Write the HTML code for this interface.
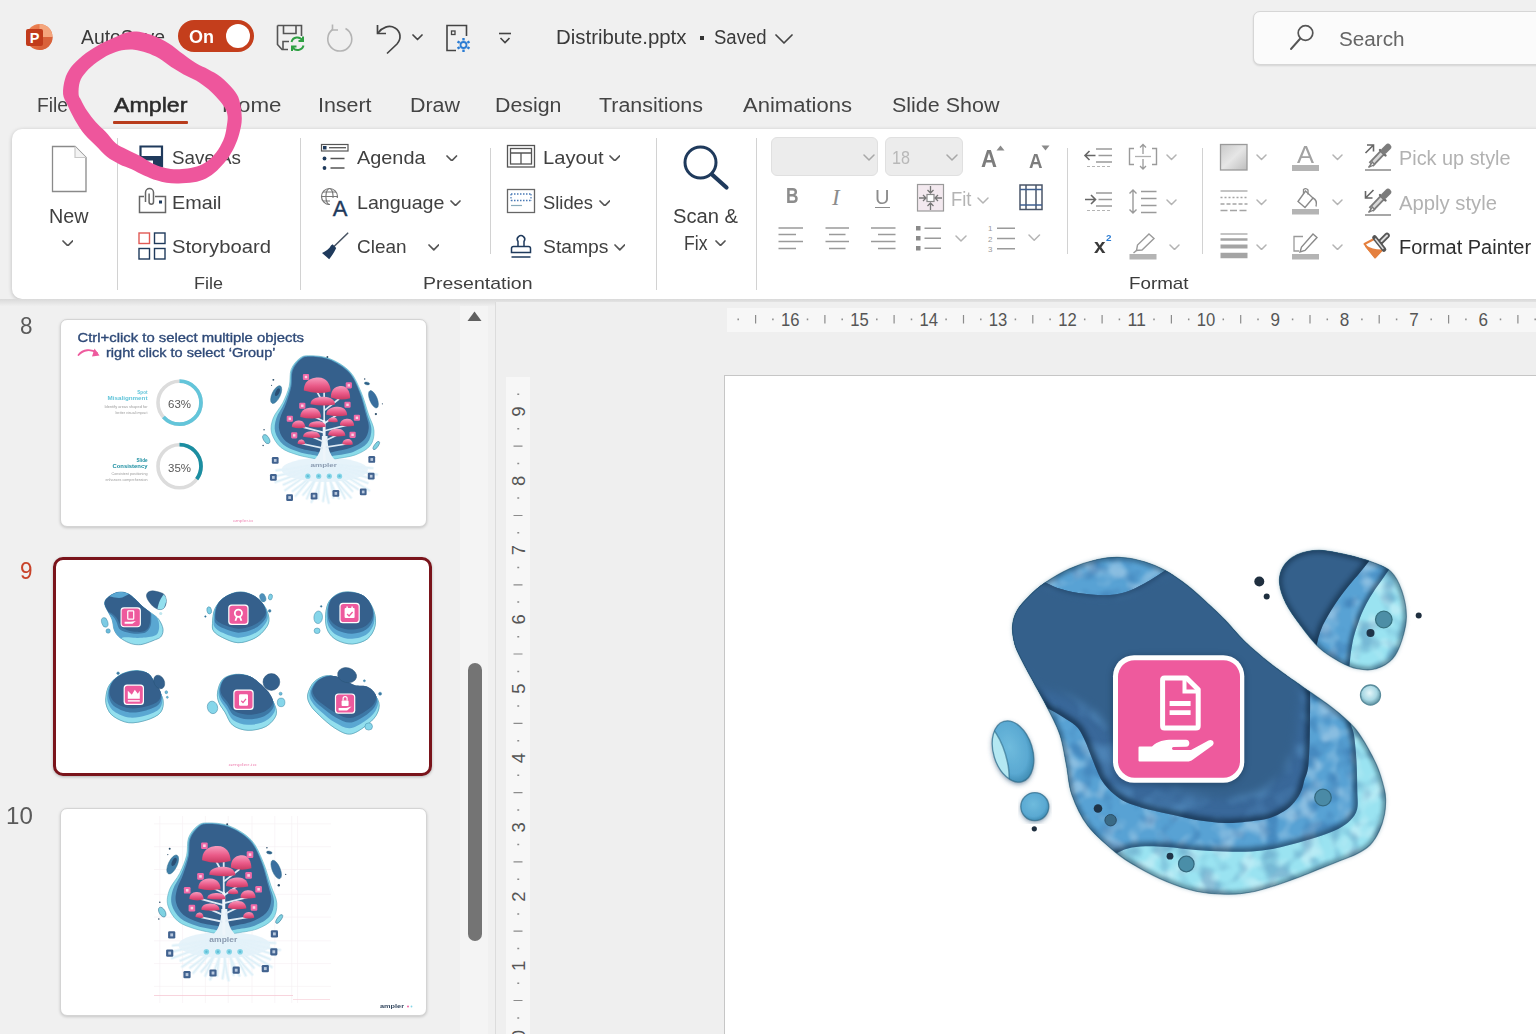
<!DOCTYPE html>
<html lang="en"><head><meta charset="utf-8"><title>Distribute.pptx - PowerPoint</title>
<style>
html,body{margin:0;padding:0}
body{width:1536px;height:1034px;overflow:hidden;background:#f0f0f0;position:relative;font-family:"Liberation Sans",sans-serif}
.a{position:absolute;display:block}
.t{position:absolute;display:block;white-space:nowrap;line-height:1;transform-origin:0 50%}
#titlebar{left:0;top:0;width:1536px;height:78px}
#tabs{left:0;top:78px;width:1536px;height:51px}
#ribbon{left:12px;top:129px;width:1560px;height:170px;background:#fff;border-radius:10px;box-shadow:0 1px 4px rgba(0,0,0,.22)}
.sep{position:absolute;width:1px;background:#d2d2d2}
#thumbs{left:0;top:302px;width:495px;height:732px;background:#f0f0f0}
#editor{left:496px;top:302px;width:1040px;height:732px;background:#efefef}
</style></head><body>
<div id="titlebar" class="a"><svg class="a" style="left:24px;top:22px" width="30" height="30" viewBox="0 0 30 30">
<defs><linearGradient id="pg" x1="0" y1="0" x2="1" y2="1"><stop offset="0" stop-color="#f08a5a"/><stop offset="1" stop-color="#d2502a"/></linearGradient></defs>
<circle cx="15.5" cy="15" r="13" fill="url(#pg)"/>
<path d="M15.5 2 A13 13 0 0 1 28.5 15 L15.5 15Z" fill="#f4a57c"/>
<path d="M15.5 28 A13 13 0 0 0 28.5 15 L15.5 15Z" fill="#d9623a"/>
<rect x="2" y="7" width="17" height="17" rx="2" fill="#c13b1b"/>
<text x="10.5" y="21" font-family="Liberation Sans,sans-serif" font-weight="bold" font-size="14.5" fill="#fff" text-anchor="middle">P</text>
</svg><span class="t" style="left:81.0px;top:27.5px;font-size:19.5px;color:#3a3a3a;font-weight:normal;transform:scaleX(0.993);">AutoSave</span><div class="a" style="left:178px;top:20px;width:76px;height:32px;border-radius:16px;background:#c43e1c"></div><div class="a" style="left:226px;top:24px;width:24px;height:24px;border-radius:12px;background:#fff"></div><span class="t" style="left:189.0px;top:27.8px;font-size:18.5px;color:#fff;font-weight:bold;transform:scaleX(0.973);">On</span><svg class="a" style="left:274px;top:22px" width="34" height="32" viewBox="0 0 34 32">
<path d="M3.5 3.5 H27.5 V14 M3.5 3.5 V22.5 L8 27.5 H14" fill="none" stroke="#555" stroke-width="1.6"/>
<path d="M9.5 3.5 V11.5 H22 V3.5" fill="none" stroke="#555" stroke-width="1.6"/>
<path d="M9 27 V19.5 H15" fill="none" stroke="#555" stroke-width="1.6"/>
<path d="M17.5 20 A6 6 0 0 1 28.5 18.5 M29 14.5 V19 H24.5" fill="none" stroke="#2ea043" stroke-width="2"/>
<path d="M29.5 23.5 A6 6 0 0 1 18.5 25 M18 29 V24.5 H22.5" fill="none" stroke="#2ea043" stroke-width="2"/>
</svg><svg class="a" style="left:323px;top:22px" width="34" height="32" viewBox="0 0 34 32">
<path d="M22.5 6.5 A12 12 0 1 1 9.5 7.5" fill="none" stroke="#b4b4b4" stroke-width="1.6"/>
<path d="M9.5 2.5 V8 H15" fill="none" stroke="#b4b4b4" stroke-width="1.6"/></svg><svg class="a" style="left:374px;top:22px" width="30" height="34" viewBox="0 0 30 34">
<path d="M3.5 3 V11.5 H12" fill="none" stroke="#444" stroke-width="1.7"/>
<path d="M4 11 C8 5.5 15 2.5 21 6 C27 9.5 27.5 17 23 22 L13 31.5" fill="none" stroke="#444" stroke-width="1.7"/></svg><svg class="a" style="left:412.0px;top:34.2px" width="11.0" height="6.5"><polyline points="1,1 5.5,5.5 10.0,1" fill="none" stroke="#444" stroke-width="1.7" stroke-linecap="round" stroke-linejoin="round"/></svg><svg class="a" style="left:444px;top:22px" width="30" height="32" viewBox="0 0 30 32">
<path d="M12 28.5 H3 V3.5 H22.5 V14" fill="none" stroke="#444" stroke-width="1.6"/>
<rect x="7.5" y="9" width="3.5" height="3.5" fill="none" stroke="#444" stroke-width="1.3"/>
<circle cx="19.5" cy="23" r="3" fill="none" stroke="#2b7cd3" stroke-width="1.8"/>
<path d="M19.5 16 V18.5 M19.5 27.5 V30 M13.5 19.5 L15.7 20.8 M23.3 25.2 L25.5 26.5 M13.5 26.5 L15.7 25.2 M23.3 20.8 L25.5 19.5" stroke="#2b7cd3" stroke-width="2.4"/>
</svg><svg class="a" style="left:497px;top:30px" width="16" height="16" viewBox="0 0 16 16">
<path d="M2 3.5 H14" stroke="#444" stroke-width="1.6"/><path d="M3.5 8 L8 12.5 L12.5 8" fill="none" stroke="#444" stroke-width="1.6"/></svg><span class="t" style="left:556.0px;top:28.0px;font-size:19.5px;color:#3a3a3a;font-weight:normal;transform:scaleX(1.047);">Distribute.pptx</span><div class="a" style="left:700px;top:36px;width:4px;height:4px;background:#333"></div><span class="t" style="left:714.0px;top:28.0px;font-size:19.5px;color:#3a3a3a;font-weight:normal;transform:scaleX(0.950);">Saved</span><svg class="a" style="left:775.0px;top:33.5px" width="18.0" height="10.0"><polyline points="1,1 9.0,9.0 17.0,1" fill="none" stroke="#444" stroke-width="1.7" stroke-linecap="round" stroke-linejoin="round"/></svg><div class="a" style="left:1253px;top:11px;width:300px;height:52px;border-radius:7px;background:#fbfbfb;border:1px solid #d6d6d6;box-shadow:0 1px 2px rgba(0,0,0,.12)"></div><svg class="a" style="left:1288px;top:22px" width="28" height="30" viewBox="0 0 28 30">
<circle cx="17.5" cy="11" r="7.3" fill="none" stroke="#555" stroke-width="1.7"/><path d="M12.3 16.5 L3 27" stroke="#555" stroke-width="1.9" stroke-linecap="round"/></svg><span class="t" style="left:1338.5px;top:29.1px;font-size:20px;color:#666;font-weight:normal;transform:scaleX(1.034);">Search</span></div><div id="tabs" class="a" style="top:0;height:129px;pointer-events:none"><span class="t" style="left:36.5px;top:95.1px;font-size:20px;color:#444;font-weight:normal;transform:scaleX(0.962);">File</span><span class="t" style="left:113.5px;top:94.6px;font-size:20.5px;color:#2b2b2b;font-weight:normal;transform:scaleX(1.132);-webkit-text-stroke:.500px #2b2b2b;">Ampler</span><div class="a" style="left:113px;top:121px;width:75px;height:3px;background:#b83c1c;border-radius:1px"></div><span class="t" style="left:221.5px;top:95.1px;font-size:20px;color:#444;font-weight:normal;transform:scaleX(1.115);">Home</span><span class="t" style="left:318.0px;top:95.1px;font-size:20px;color:#444;font-weight:normal;transform:scaleX(1.070);">Insert</span><span class="t" style="left:409.5px;top:95.1px;font-size:20px;color:#444;font-weight:normal;transform:scaleX(1.071);">Draw</span><span class="t" style="left:494.5px;top:95.1px;font-size:20px;color:#444;font-weight:normal;transform:scaleX(1.068);">Design</span><span class="t" style="left:599.0px;top:95.1px;font-size:20px;color:#444;font-weight:normal;transform:scaleX(1.071);">Transitions</span><span class="t" style="left:743.0px;top:95.1px;font-size:20px;color:#444;font-weight:normal;transform:scaleX(1.102);">Animations</span><span class="t" style="left:892.0px;top:95.1px;font-size:20px;color:#444;font-weight:normal;transform:scaleX(1.074);">Slide Show</span></div><div id="ribbon" class="a"></div><div id="ribbonc" class="a" style="left:0;top:0"><svg class="a" style="left:50px;top:144px" width="40" height="50" viewBox="0 0 40 50">
<path d="M2.5 2.5 H25 L36 13.5 V47.5 H2.5Z" fill="#fff" stroke="#8a8a8a" stroke-width="1.3"/>
<path d="M25 2.5 V13.5 H36" fill="#f3f3f3" stroke="#c8c8c8" stroke-width="1.2"/></svg><span class="t" style="left:48.5px;top:207.0px;font-size:19.5px;color:#404040;font-weight:normal;transform:scaleX(1.013);">New</span><svg class="a" style="left:61.5px;top:239.6px" width="11.5" height="6.8"><polyline points="1,1 5.8,5.8 10.5,1" fill="none" stroke="#555" stroke-width="1.7" stroke-linecap="round" stroke-linejoin="round"/></svg><div class="sep" style="left:117px;top:138px;height:152px"></div><svg class="a" style="left:137px;top:144px" width="28" height="26" viewBox="0 0 28 26">
<path d="M3.5 2.5 H25 V22.5 H3.5Z" fill="none" stroke="#1f3a5c" stroke-width="2.2"/>
<rect x="4" y="12" width="21" height="4.5" fill="#1f3a5c"/>
<rect x="16" y="16" width="9" height="7" fill="#1f3a5c"/></svg><span class="t" style="left:172.0px;top:148.4px;font-size:19px;color:#404040;font-weight:normal;transform:scaleX(0.990);">Save As</span><svg class="a" style="left:136px;top:186px" width="32" height="30" viewBox="0 0 32 30">
<path d="M8 10.5 H3.5 V26.5 H29.5 V10.5 H19" fill="none" stroke="#666" stroke-width="1.5"/>
<path d="M9.5 16 V6.5 A4 4 0 0 1 17.500 6.500 V16 A2.200 2.200 0 0 1 13.100 16 V7.500" fill="none" stroke="#666" stroke-width="1.5"/>
<rect x="23" y="14.5" width="3" height="3" fill="#1f3a5c"/></svg><span class="t" style="left:172.0px;top:193.4px;font-size:19px;color:#404040;font-weight:normal;transform:scaleX(1.042);">Email</span><svg class="a" style="left:137px;top:231px" width="30" height="30" viewBox="0 0 30 30">
<rect x="2" y="2" width="10.5" height="10.500" fill="none" stroke="#e05a55" stroke-width="1.4"/>
<rect x="17.500" y="2" width="10.500" height="10.500" fill="none" stroke="#1f3a5c" stroke-width="1.4"/>
<rect x="2" y="17.500" width="10.500" height="10.500" fill="none" stroke="#1f3a5c" stroke-width="1.4"/>
<rect x="17.500" y="17.500" width="10.500" height="10.500" fill="none" stroke="#1f3a5c" stroke-width="1.4"/></svg><span class="t" style="left:172.0px;top:237.4px;font-size:19px;color:#404040;font-weight:normal;transform:scaleX(1.065);">Storyboard</span><span class="t" style="left:193.5px;top:275.1px;font-size:17px;color:#404040;font-weight:normal;transform:scaleX(1.059);">File</span><div class="sep" style="left:300px;top:138px;height:152px"></div><svg class="a" style="left:319px;top:142px" width="32" height="30" viewBox="0 0 32 30">
<rect x="2.500" y="2.500" width="26.500" height="6.500" fill="none" stroke="#555" stroke-width="1.2"/>
<rect x="4" y="4" width="3.500" height="3.500" fill="#1f3a5c"/><path d="M10 5.700 H27" stroke="#555" stroke-width="1.300"/>
<circle cx="5.500" cy="16.500" r="1.900" fill="#1f3a5c"/><path d="M11.500 16.500 H25.500" stroke="#555" stroke-width="1.500"/>
<circle cx="5.500" cy="26" r="1.900" fill="#1f3a5c"/><path d="M11.500 26 H25.500" stroke="#555" stroke-width="1.500"/></svg><span class="t" style="left:356.5px;top:148.4px;font-size:19px;color:#404040;font-weight:normal;transform:scaleX(1.046);">Agenda</span><svg class="a" style="left:446.0px;top:154.6px" width="11.5" height="6.8"><polyline points="1,1 5.8,5.8 10.5,1" fill="none" stroke="#555" stroke-width="1.7" stroke-linecap="round" stroke-linejoin="round"/></svg><svg class="a" style="left:319px;top:186px" width="32" height="32" viewBox="0 0 32 32">
<circle cx="10.500" cy="10.500" r="8" fill="none" stroke="#777" stroke-width="1.200"/>
<ellipse cx="10.500" cy="10.500" rx="3.600" ry="8" fill="none" stroke="#777" stroke-width="1.100"/>
<path d="M2.500 10.500 H18.500 M4 6 H17 M4 15 H17" stroke="#777" stroke-width="1.100"/>
<rect x="11" y="12" width="20" height="19" fill="#fff"/>
<text x="21" y="29.500" text-anchor="middle" font-family="Liberation Sans,sans-serif" font-size="22" fill="#1f3a5c" stroke="#1f3a5c" stroke-width=".4">A</text></svg><span class="t" style="left:356.5px;top:193.4px;font-size:19px;color:#404040;font-weight:normal;transform:scaleX(1.035);">Language</span><svg class="a" style="left:450.0px;top:199.8px" width="11.0" height="6.5"><polyline points="1,1 5.5,5.5 10.0,1" fill="none" stroke="#555" stroke-width="1.7" stroke-linecap="round" stroke-linejoin="round"/></svg><svg class="a" style="left:319px;top:231px" width="32" height="30" viewBox="0 0 32 30">
<path d="M28.700 2.200 L15 15.500" stroke="#4a5564" stroke-width="1.600" stroke-linecap="round"/>
<path d="M13.600 13.200 L17.200 17 C15.500 20.500 13.500 24 10.200 28.200 L3 22 C7 20.500 10.500 17.500 12 14.500Z" fill="#1f3a5c"/></svg><span class="t" style="left:356.5px;top:237.4px;font-size:19px;color:#404040;font-weight:normal;transform:scaleX(0.997);">Clean</span><svg class="a" style="left:427.5px;top:244.1px" width="11.5" height="6.8"><polyline points="1,1 5.8,5.8 10.5,1" fill="none" stroke="#555" stroke-width="1.7" stroke-linecap="round" stroke-linejoin="round"/></svg><div class="sep" style="left:489.500px;top:148px;height:106px"></div><svg class="a" style="left:505px;top:143px" width="32" height="26" viewBox="0 0 32 26">
<rect x="2.500" y="2.500" width="27" height="21.500" fill="none" stroke="#555" stroke-width="1.300"/>
<rect x="5.500" y="5.500" width="21" height="15.500" fill="none" stroke="#555" stroke-width="1.300"/>
<path d="M5.500 10 H26.500 M16 10 V21" stroke="#555" stroke-width="1.300"/></svg><span class="t" style="left:542.5px;top:148.4px;font-size:19px;color:#404040;font-weight:normal;transform:scaleX(1.061);">Layout</span><svg class="a" style="left:608.5px;top:154.6px" width="11.5" height="6.8"><polyline points="1,1 5.8,5.8 10.5,1" fill="none" stroke="#555" stroke-width="1.7" stroke-linecap="round" stroke-linejoin="round"/></svg><svg class="a" style="left:505px;top:187px" width="32" height="28" viewBox="0 0 32 28">
<rect x="2.500" y="2.500" width="27" height="23" fill="none" stroke="#666" stroke-width="1.300"/>
<path d="M6 7 H26" stroke="#4a7ab5" stroke-width="1.400" stroke-dasharray="1.500 1.500"/>
<path d="M6 13.500 H26" stroke="#4a7ab5" stroke-width="1.400" stroke-dasharray="1.500 1.500"/>
<path d="M6 7 V13.500 M26 7 V13.500" stroke="#4a7ab5" stroke-width="1.200" stroke-dasharray="1.500 1.500"/>
<path d="M6 18.500 H17" stroke="#8ab" stroke-width="1.200"/></svg><span class="t" style="left:542.5px;top:193.4px;font-size:19px;color:#404040;font-weight:normal;transform:scaleX(0.966);">Slides</span><svg class="a" style="left:598.5px;top:199.6px" width="11.5" height="6.8"><polyline points="1,1 5.8,5.8 10.5,1" fill="none" stroke="#555" stroke-width="1.7" stroke-linecap="round" stroke-linejoin="round"/></svg><svg class="a" style="left:508px;top:232px" width="26" height="28" viewBox="0 0 26 28">
<path d="M10 14 V9.500 A3.700 3.700 0 1 1 16 9.500 V14" fill="none" stroke="#1f3a5c" stroke-width="1.500"/>
<path d="M3.500 20.500 V16.500 Q3.500 14.500 5.500 14.500 H20.500 Q22.500 14.500 22.500 16.500 V20.500Z" fill="none" stroke="#1f3a5c" stroke-width="1.500"/>
<path d="M3.500 25 H22.500" stroke="#1f3a5c" stroke-width="1.500"/></svg><span class="t" style="left:542.5px;top:237.4px;font-size:19px;color:#404040;font-weight:normal;transform:scaleX(1.017);">Stamps</span><svg class="a" style="left:613.5px;top:244.1px" width="11.5" height="6.8"><polyline points="1,1 5.8,5.8 10.5,1" fill="none" stroke="#555" stroke-width="1.7" stroke-linecap="round" stroke-linejoin="round"/></svg><span class="t" style="left:423.0px;top:275.1px;font-size:17px;color:#404040;font-weight:normal;transform:scaleX(1.147);">Presentation</span><div class="sep" style="left:655.500px;top:138px;height:152px"></div><svg class="a" style="left:680px;top:142px" width="52" height="52" viewBox="0 0 52 52">
<circle cx="20.500" cy="20.500" r="15.500" fill="none" stroke="#1f3a5c" stroke-width="3"/>
<path d="M32 32.500 L46.500 45.500" stroke="#1f3a5c" stroke-width="4.200" stroke-linecap="round"/></svg><span class="t" style="left:673.0px;top:207.0px;font-size:19.5px;color:#404040;font-weight:normal;transform:scaleX(1.034);">Scan &amp;</span><span class="t" style="left:684.0px;top:234.0px;font-size:19.5px;color:#404040;font-weight:normal;transform:scaleX(0.904);">Fix</span><svg class="a" style="left:714.5px;top:239.8px" width="11.0" height="6.5"><polyline points="1,1 5.5,5.5 10.0,1" fill="none" stroke="#555" stroke-width="1.7" stroke-linecap="round" stroke-linejoin="round"/></svg><div class="sep" style="left:756px;top:138px;height:152px"></div><div class="a" style="left:771px;top:137px;width:107px;height:39px;border-radius:6px;background:#ececec;border:1px solid #e0e0e0;box-sizing:border-box"></div><div class="a" style="left:885px;top:137px;width:78px;height:39px;border-radius:6px;background:#ececec;border:1px solid #e0e0e0;box-sizing:border-box"></div><svg class="a" style="left:862.5px;top:154.0px" width="12.0" height="7.0"><polyline points="1,1 6.0,6.0 11.0,1" fill="none" stroke="#a8a8a8" stroke-width="1.5" stroke-linecap="round" stroke-linejoin="round"/></svg><svg class="a" style="left:946.0px;top:154.0px" width="12.0" height="7.0"><polyline points="1,1 6.0,6.0 11.0,1" fill="none" stroke="#a8a8a8" stroke-width="1.5" stroke-linecap="round" stroke-linejoin="round"/></svg><span class="t" style="left:892.0px;top:147.9px;font-size:19px;color:#b8b8b8;font-weight:normal;transform:scaleX(0.852);">18</span><span class="t" style="left:981.0px;top:147.2px;font-size:24px;color:#7d7d7d;font-weight:bold;transform:scaleX(0.923);">A</span><svg class="a" style="left:996px;top:145px" width="9" height="6"><path d="M0.500 5.500 L4.500 0.500 L8.500 5.500Z" fill="#8a8a8a"/></svg><span class="t" style="left:1028.5px;top:150.6px;font-size:20px;color:#7d7d7d;font-weight:bold;transform:scaleX(0.935);">A</span><svg class="a" style="left:1041px;top:145px" width="9" height="6"><path d="M0.500 0.500 L4.500 5.500 L8.500 0.500Z" fill="#8a8a8a"/></svg><span class="t" style="left:786.0px;top:186.3px;font-size:21.5px;color:#8c8c8c;font-weight:bold;transform:scaleX(0.805);">B</span><span class="t" style="left:832px;top:185.500px;font-size:23px;color:#8c8c8c;font-style:italic;font-family:'Liberation Serif',serif">I</span><span class="t" style="left:875.0px;top:186.6px;font-size:20px;color:#8c8c8c;font-weight:normal;transform:scaleX(1.004);">U</span><div class="a" style="left:874.500px;top:206.500px;width:15.500px;height:1.500px;background:#8c8c8c"></div><svg class="a" style="left:916px;top:183px" width="30" height="30" viewBox="0 0 30 30">
<rect x="1.500" y="1.500" width="26" height="26.500" fill="#f3e9ef" stroke="#9a9a9a" stroke-width="1.200"/>
<rect x="11" y="11.500" width="7" height="7" fill="#fff" stroke="#8a8a8a" stroke-width="1.200"/>
<path d="M14.500 3 V10 M11.500 7 L14.500 10 L17.500 7 M14.500 27 V20 M11.500 23 L14.500 20 L17.500 23 M3 15 H10 M7 12 L10 15 L7 18 M26 15 H19 M22 12 L19 15 L22 18" fill="none" stroke="#777" stroke-width="1.300"/></svg><span class="t" style="left:951.0px;top:190.0px;font-size:19.5px;color:#b4b4b4;font-weight:normal;transform:scaleX(0.946);">Fit</span><svg class="a" style="left:977.0px;top:196.5px" width="12.0" height="7.0"><polyline points="1,1 6.0,6.0 11.0,1" fill="none" stroke="#b4b4b4" stroke-width="1.5" stroke-linecap="round" stroke-linejoin="round"/></svg><svg class="a" style="left:1018px;top:183px" width="26" height="28" viewBox="0 0 26 28">
<rect x="2" y="2" width="22" height="24.500" fill="none" stroke="#4a5568" stroke-width="1.500"/>
<path d="M8 2 V26.500 M18 2 V26.500" stroke="#4a5568" stroke-width="1.500"/>
<path d="M2 6.500 H24 M2 22 H24" stroke="#3f5f8f" stroke-width="1.300"/></svg><svg class="a" style="left:777px;top:225px" width="30" height="26" viewBox="0 0 30 26"><path d="M1.5 3 H26 M1.5 9.5 H19 M1.5 16.5 H26 M1.5 23.5 H19 " stroke="#9a9a9a" stroke-width="1.5" fill="none"/></svg><svg class="a" style="left:824px;top:225px" width="30" height="26" viewBox="0 0 30 26"><path d="M1.5 3 H25 M5 9.5 H21.5 M1.5 16.5 H25 M5 23.5 H21.5 " stroke="#9a9a9a" stroke-width="1.5" fill="none"/></svg><svg class="a" style="left:870px;top:225px" width="30" height="26" viewBox="0 0 30 26"><path d="M1 3 H25.5 M8 9.5 H25.5 M1 16.5 H25.5 M8 23.5 H25.5 " stroke="#9a9a9a" stroke-width="1.5" fill="none"/></svg><svg class="a" style="left:914px;top:224px" width="30" height="28" viewBox="0 0 30 28">
<rect x="2" y="2" width="4.500" height="4.500" fill="#8a8a8a"/><rect x="2" y="12" width="4.500" height="4.500" fill="#8a8a8a"/><rect x="2" y="22" width="4.500" height="4.500" fill="#8a8a8a"/>
<path d="M10.500 4.300 H27 M10.500 14.300 H27 M10.500 24.300 H27" stroke="#9a9a9a" stroke-width="1.500"/></svg><svg class="a" style="left:955.0px;top:234.5px" width="12.0" height="7.0"><polyline points="1,1 6.0,6.0 11.0,1" fill="none" stroke="#b4b4b4" stroke-width="1.5" stroke-linecap="round" stroke-linejoin="round"/></svg><svg class="a" style="left:987px;top:222px" width="30" height="32" viewBox="0 0 30 32">
<text x="1" y="9" font-family="Liberation Sans,sans-serif" font-size="8" fill="#9a9a9a">1</text>
<text x="1" y="19.500" font-family="Liberation Sans,sans-serif" font-size="8" fill="#9a9a9a">2</text>
<text x="1" y="30" font-family="Liberation Sans,sans-serif" font-size="8" fill="#9a9a9a">3</text>
<path d="M10 6.300 H28 M10 16.500 H28 M10 26.700 H28" stroke="#9a9a9a" stroke-width="1.500"/></svg><svg class="a" style="left:1028.0px;top:234.4px" width="12.5" height="7.2"><polyline points="1,1 6.2,6.2 11.5,1" fill="none" stroke="#b4b4b4" stroke-width="1.5" stroke-linecap="round" stroke-linejoin="round"/></svg><div class="sep" style="left:1067px;top:148px;height:106px"></div><svg class="a" style="left:1083px;top:146px" width="32" height="22" viewBox="0 0 32 22">
<path d="M13 3 H29 M15.500 9.500 H29 M13 16 H29" stroke="#9a9a9a" stroke-width="1.500"/>
<path d="M2 9.500 H12.500 M6.500 5 L2 9.500 L6.500 14" fill="none" stroke="#666" stroke-width="1.600"/>
<path d="M4 20.500 H29" stroke="#b4b4b4" stroke-width="1" stroke-dasharray="3 2"/></svg><svg class="a" style="left:1083px;top:190px" width="32" height="22" viewBox="0 0 32 22">
<path d="M13 3 H29 M15.500 9.500 H29 M13 16 H29" stroke="#9a9a9a" stroke-width="1.500"/>
<path d="M2 9.500 H12.500 M8 5 L12.500 9.500 L8 14" fill="none" stroke="#666" stroke-width="1.600"/>
<path d="M4 20.500 H29" stroke="#b4b4b4" stroke-width="1" stroke-dasharray="3 2"/></svg><svg class="a" style="left:1127px;top:142px" width="32" height="30" viewBox="0 0 32 30">
<path d="M7 6.500 H2.500 V22.500 H7 M25 6.500 H29.500 V22.500 H25" fill="none" stroke="#9a9a9a" stroke-width="1.400"/>
<path d="M8 14.500 H24" stroke="#b0b0b0" stroke-width="1.300"/>
<path d="M16 2.500 V12 M13 5.500 L16 2.500 L19 5.500 M16 27 V17 M13 24 L16 27 L19 24" fill="none" stroke="#9a9a9a" stroke-width="1.300"/></svg><svg class="a" style="left:1166.0px;top:154.2px" width="11.0" height="6.5"><polyline points="1,1 5.5,5.5 10.0,1" fill="none" stroke="#b4b4b4" stroke-width="1.5" stroke-linecap="round" stroke-linejoin="round"/></svg><svg class="a" style="left:1127px;top:187px" width="32" height="30" viewBox="0 0 32 30">
<path d="M6 3 V26 M2.500 6.500 L6 3 L9.500 6.500 M2.500 22.500 L6 26 L9.500 22.500" fill="none" stroke="#9a9a9a" stroke-width="1.400"/>
<path d="M14 4.500 H29.500 M14 11.500 H29.500 M14 18.500 H29.500 M14 25.500 H29.500" stroke="#9a9a9a" stroke-width="1.500"/></svg><svg class="a" style="left:1166.0px;top:199.2px" width="11.0" height="6.5"><polyline points="1,1 5.5,5.5 10.0,1" fill="none" stroke="#b4b4b4" stroke-width="1.5" stroke-linecap="round" stroke-linejoin="round"/></svg><span class="t" style="left:1093.5px;top:235.2px;font-size:21px;color:#3a3a3a;font-weight:bold;transform:scaleX(0.985);">x</span><span class="t" style="left:1105.5px;top:233.0px;font-size:9.5px;color:#2b7cd3;font-weight:bold;transform:scaleX(1.041);">2</span><svg class="a" style="left:1127px;top:231px" width="32" height="30" viewBox="0 0 32 30">
<path d="M22 3 L27 7.500 L15 19 L9.500 19.500 L10.500 14Z" fill="none" stroke="#9a9a9a" stroke-width="1.400"/>
<path d="M9.500 19.500 L6.500 22" stroke="#9a9a9a" stroke-width="1.400"/>
<rect x="2.500" y="23" width="27" height="5.500" fill="#b4b4b4"/></svg><svg class="a" style="left:1169.0px;top:243.8px" width="11.0" height="6.5"><polyline points="1,1 5.5,5.5 10.0,1" fill="none" stroke="#b4b4b4" stroke-width="1.5" stroke-linecap="round" stroke-linejoin="round"/></svg><div class="sep" style="left:1202px;top:148px;height:106px"></div><span class="t" style="left:1129.0px;top:275.1px;font-size:17px;color:#3b3b3b;font-weight:normal;transform:scaleX(1.105);">Format</span><svg class="a" style="left:1218px;top:142px" width="32" height="30" viewBox="0 0 32 30">
<defs><linearGradient id="sf" x1="0" y1="0" x2="1" y2="1"><stop offset="0" stop-color="#c9c9c9"/><stop offset=".5" stop-color="#e6e6e6"/><stop offset="1" stop-color="#bdbdbd"/></linearGradient></defs>
<rect x="2.500" y="2.500" width="26.500" height="25.500" fill="url(#sf)" stroke="#9a9a9a" stroke-width="1.300"/></svg><svg class="a" style="left:1256.0px;top:154.2px" width="11.0" height="6.5"><polyline points="1,1 5.5,5.5 10.0,1" fill="none" stroke="#b4b4b4" stroke-width="1.5" stroke-linecap="round" stroke-linejoin="round"/></svg><svg class="a" style="left:1218px;top:188px" width="32" height="26" viewBox="0 0 32 26">
<path d="M2.500 3 H29.500" stroke="#a4a4a4" stroke-width="1.300"/>
<path d="M2.500 9.500 H29.500" stroke="#a4a4a4" stroke-width="1.500" stroke-dasharray="2 2"/>
<path d="M2.500 16 H29.500" stroke="#a4a4a4" stroke-width="1.500" stroke-dasharray="4 2"/>
<path d="M2.500 22.500 H29.500" stroke="#a4a4a4" stroke-width="1.500" stroke-dasharray="7 2.500"/></svg><svg class="a" style="left:1256.0px;top:199.2px" width="11.0" height="6.5"><polyline points="1,1 5.5,5.5 10.0,1" fill="none" stroke="#b4b4b4" stroke-width="1.5" stroke-linecap="round" stroke-linejoin="round"/></svg><svg class="a" style="left:1218px;top:231px" width="32" height="30" viewBox="0 0 32 30">
<path d="M2.500 3 H29.500" stroke="#a4a4a4" stroke-width="1.300"/>
<path d="M2.500 8.500 H29.500" stroke="#a4a4a4" stroke-width="2.500"/>
<path d="M2.500 15.500 H29.500" stroke="#a4a4a4" stroke-width="4"/>
<path d="M2.500 24.500 H29.500" stroke="#a4a4a4" stroke-width="5.500"/></svg><svg class="a" style="left:1256.0px;top:243.8px" width="11.0" height="6.5"><polyline points="1,1 5.5,5.5 10.0,1" fill="none" stroke="#b4b4b4" stroke-width="1.5" stroke-linecap="round" stroke-linejoin="round"/></svg><span class="t" style="left:1297.0px;top:142.7px;font-size:24px;color:#a2a2a2;font-weight:normal;transform:scaleX(1.062);">A</span><div class="a" style="left:1292px;top:165px;width:27px;height:5.500px;background:#b4b4b4"></div><svg class="a" style="left:1331.5px;top:154.2px" width="11.0" height="6.5"><polyline points="1,1 5.5,5.5 10.0,1" fill="none" stroke="#b4b4b4" stroke-width="1.5" stroke-linecap="round" stroke-linejoin="round"/></svg><svg class="a" style="left:1290px;top:186px" width="32" height="30" viewBox="0 0 32 30">
<path d="M8 15.500 L15.500 5 L23 12 L15 21.500Z" fill="none" stroke="#8a8a8a" stroke-width="1.400"/>
<path d="M13.500 8 V3.500 Q16 1.500 18 4 V8.500" fill="none" stroke="#8a8a8a" stroke-width="1.300"/>
<path d="M23 12 Q27.500 14 26 20.500" fill="none" stroke="#8a8a8a" stroke-width="1.400"/>
<rect x="2" y="23" width="27" height="5.500" fill="#b4b4b4"/></svg><svg class="a" style="left:1331.5px;top:199.2px" width="11.0" height="6.5"><polyline points="1,1 5.5,5.5 10.0,1" fill="none" stroke="#b4b4b4" stroke-width="1.5" stroke-linecap="round" stroke-linejoin="round"/></svg><svg class="a" style="left:1290px;top:231px" width="32" height="30" viewBox="0 0 32 30">
<path d="M13 5.500 H4 V20 H9" fill="none" stroke="#9a9a9a" stroke-width="1.300"/>
<path d="M23 3 L27 6.500 L15 19.500 L10 21 L11.500 16Z" fill="none" stroke="#8a8a8a" stroke-width="1.400"/>
<rect x="2" y="23" width="27" height="5.500" fill="#b4b4b4"/></svg><svg class="a" style="left:1331.5px;top:243.8px" width="11.0" height="6.5"><polyline points="1,1 5.5,5.5 10.0,1" fill="none" stroke="#b4b4b4" stroke-width="1.5" stroke-linecap="round" stroke-linejoin="round"/></svg><svg class="a" style="left:1362px;top:141px" width="32" height="32" viewBox="0 0 32 32">
<path d="M20.500 11.500 L9 23.500" stroke="#7c7c7c" stroke-width="6.400" stroke-linecap="butt"/>
<path d="M20 12 L9.500 23" stroke="#d9d9d9" stroke-width="2.600"/>
<path d="M10.500 21 L6.500 26.500 L12.500 23.500Z" fill="#fff" stroke="#7c7c7c" stroke-width="1.300"/>
<path d="M18 9 L23.500 14.500" stroke="#6e6e6e" stroke-width="2.400" stroke-linecap="round"/>
<path d="M22 10 L26 6" stroke="#7c7c7c" stroke-width="6.500" stroke-linecap="round"/>
<path d="M3 29 H29" stroke="#8a8a8a" stroke-width="1.500"/><path d="M3.500 12 L11 4.500 M5 4 H11.500 V10.500" fill="none" stroke="#666" stroke-width="1.600"/></svg><svg class="a" style="left:1362px;top:186px" width="32" height="32" viewBox="0 0 32 32">
<path d="M20.500 11.500 L9 23.500" stroke="#7c7c7c" stroke-width="6.400" stroke-linecap="butt"/>
<path d="M20 12 L9.500 23" stroke="#d9d9d9" stroke-width="2.600"/>
<path d="M10.500 21 L6.500 26.500 L12.500 23.500Z" fill="#fff" stroke="#7c7c7c" stroke-width="1.300"/>
<path d="M18 9 L23.500 14.500" stroke="#6e6e6e" stroke-width="2.400" stroke-linecap="round"/>
<path d="M22 10 L26 6" stroke="#7c7c7c" stroke-width="6.500" stroke-linecap="round"/>
<path d="M3 29 H29" stroke="#8a8a8a" stroke-width="1.500"/><path d="M11.500 4 L4 11.500 M3.500 5 V12 H10.500" fill="none" stroke="#666" stroke-width="1.600"/></svg><span class="t" style="left:1398.5px;top:149.0px;font-size:19.5px;color:#b2b2b2;font-weight:normal;transform:scaleX(1.019);">Pick up style</span><span class="t" style="left:1398.5px;top:194.0px;font-size:19.5px;color:#b2b2b2;font-weight:normal;transform:scaleX(1.039);">Apply style</span><svg class="a" style="left:1362px;top:231px" width="32" height="30" viewBox="0 0 32 30">
<path d="M2.500 13 L13 7.500 L21 18 L13 26.500Z" fill="#fff" stroke="#e5803f" stroke-width="2" stroke-linejoin="round"/>
<path d="M4 15.500 Q10 19 19 19.500 L13 26Z" fill="#e5803f" stroke="#e5803f" stroke-width="1.800" stroke-linejoin="round"/>
<path d="M12.500 6.500 L22 18.500" stroke="#555" stroke-width="4.600" stroke-linecap="round"/>
<path d="M18.500 11 L25 4.500" stroke="#555" stroke-width="5.600" stroke-linecap="round"/>
<path d="M13.500 8 L21 17.500" stroke="#dcdcdc" stroke-width="1.400" stroke-linecap="round"/>
<path d="M19.500 10 L25 4.500" stroke="#dcdcdc" stroke-width="2" stroke-linecap="round"/></svg><span class="t" style="left:1398.5px;top:237.5px;font-size:19.5px;color:#2e2e2e;font-weight:normal;transform:scaleX(1.024);">Format Painter</span></div><div id="thumbs" class="a"></div><div class="a" style="left:460px;top:302px;width:28px;height:732px;background:#f4f4f4"></div><div class="a" style="left:0;top:299px;width:1536px;height:7px;background:linear-gradient(#d9d9d9,#efefef)"></div><span class="t" style="left:19.5px;top:314.0px;font-size:24.5px;color:#5a5a5a;font-weight:normal;transform:scaleX(0.917);">8</span><span class="t" style="left:20.0px;top:558.5px;font-size:24.5px;color:#c8432a;font-weight:normal;transform:scaleX(0.917);">9</span><span class="t" style="left:5.7px;top:803.7px;font-size:24.5px;color:#5a5a5a;font-weight:normal;transform:scaleX(0.983);">10</span><div class="a" style="left:59.500px;top:319px;width:367px;height:208px;box-sizing:border-box;background:#fff;border:1px solid #d4d4d4;border-radius:7px;box-shadow:0 1px 3px rgba(0,0,0,.18)"></div><div class="a" style="left:53px;top:557px;width:379px;height:219px;box-sizing:border-box;background:#fff;border:3.500px solid #7a141b;border-radius:10px;box-shadow:0 1px 3px rgba(0,0,0,.25)"></div><div class="a" style="left:59.500px;top:808px;width:367px;height:208px;box-sizing:border-box;background:#fff;border:1px solid #d4d4d4;border-radius:7px;box-shadow:0 1px 3px rgba(0,0,0,.18)"></div><svg class="a" style="left:466px;top:309px" width="18" height="14"><path d="M1.500 12 L8.500 2.500 L15.500 12Z" fill="#5f5f5f"/></svg><div class="a" style="left:467.500px;top:663px;width:14px;height:277.500px;border-radius:7px;background:#747474"></div><div id="editor" class="a"></div><div class="a" style="left:495px;top:302px;width:1px;height:732px;background:#dcdcdc"></div><div class="a" style="left:727px;top:308px;width:809px;height:24px;background:#f7f7f7"></div><div class="a" style="left:506px;top:377px;width:24px;height:657px;background:#f7f7f7"></div><div class="a" style="left:724px;top:375px;width:830px;height:700px;background:#fff;border:1px solid #c6c6c6;box-sizing:border-box"></div><svg class="a" style="left:0;top:0" width="1536" height="1034" viewBox="0 0 1536 1034"><g font-family="Liberation Sans,sans-serif" font-size="18.500" fill="#555" text-anchor="middle"><text x="790.2" y="326" textLength="18.5" lengthAdjust="spacingAndGlyphs">16</text><text x="859.5" y="326" textLength="18.5" lengthAdjust="spacingAndGlyphs">15</text><text x="928.8" y="326" textLength="18.5" lengthAdjust="spacingAndGlyphs">14</text><text x="998.1" y="326" textLength="18.5" lengthAdjust="spacingAndGlyphs">13</text><text x="1067.4" y="326" textLength="18.5" lengthAdjust="spacingAndGlyphs">12</text><text x="1136.7" y="326" textLength="18.5" lengthAdjust="spacingAndGlyphs">11</text><text x="1206.0" y="326" textLength="18.5" lengthAdjust="spacingAndGlyphs">10</text><text x="1275.3" y="326" textLength="9.5" lengthAdjust="spacingAndGlyphs">9</text><text x="1344.6" y="326" textLength="9.5" lengthAdjust="spacingAndGlyphs">8</text><text x="1413.9" y="326" textLength="9.5" lengthAdjust="spacingAndGlyphs">7</text><text x="1483.2" y="326" textLength="9.5" lengthAdjust="spacingAndGlyphs">6</text><text transform="translate(524.500 411.5) rotate(-90)" x="0" y="0">9</text><text transform="translate(524.500 480.8) rotate(-90)" x="0" y="0">8</text><text transform="translate(524.500 550.1) rotate(-90)" x="0" y="0">7</text><text transform="translate(524.500 619.4) rotate(-90)" x="0" y="0">6</text><text transform="translate(524.500 688.7) rotate(-90)" x="0" y="0">5</text><text transform="translate(524.500 758.0) rotate(-90)" x="0" y="0">4</text><text transform="translate(524.500 827.3) rotate(-90)" x="0" y="0">3</text><text transform="translate(524.500 896.6) rotate(-90)" x="0" y="0">2</text><text transform="translate(524.500 965.9) rotate(-90)" x="0" y="0">1</text><text transform="translate(524.500 1035.2) rotate(-90)" x="0" y="0">0</text></g><path d="M755.6 315 V323.500 M824.9 315 V323.500 M894.1 315 V323.500 M963.5 315 V323.500 M1032.8 315 V323.500 M1102.1 315 V323.500 M1171.4 315 V323.500 M1240.7 315 V323.500 M1310.0 315 V323.500 M1379.2 315 V323.500 M1448.6 315 V323.500 M1517.9 315 V323.500 M513.500 446.1 H522.500 M513.500 515.5 H522.500 M513.500 584.8 H522.500 M513.500 654.0 H522.500 M513.500 723.4 H522.500 M513.500 792.6 H522.500 M513.500 861.9 H522.500 M513.500 931.2 H522.500 M513.500 1000.5 H522.500 " stroke="#8c8c8c" stroke-width="1.200" fill="none"/><path d="M738.2 318.500 V320.300 M772.9 318.500 V320.300 M807.5 318.500 V320.300 M842.2 318.500 V320.300 M876.8 318.500 V320.300 M911.5 318.500 V320.300 M946.1 318.500 V320.300 M980.8 318.500 V320.300 M1015.4 318.500 V320.300 M1050.1 318.500 V320.300 M1084.7 318.500 V320.300 M1119.4 318.500 V320.300 M1154.0 318.500 V320.300 M1188.7 318.500 V320.300 M1223.3 318.500 V320.300 M1258.0 318.500 V320.300 M1292.6 318.500 V320.300 M1327.3 318.500 V320.300 M1361.9 318.500 V320.300 M1396.6 318.500 V320.300 M1431.2 318.500 V320.300 M1465.9 318.500 V320.300 M1500.5 318.500 V320.300 M1535.2 318.500 V320.300 M517.300 394.2 H519.200 M517.300 428.8 H519.200 M517.300 463.5 H519.200 M517.300 498.1 H519.200 M517.300 532.8 H519.200 M517.300 567.4 H519.200 M517.300 602.1 H519.200 M517.300 636.7 H519.200 M517.300 671.4 H519.200 M517.300 706.0 H519.200 M517.300 740.7 H519.200 M517.300 775.3 H519.200 M517.300 810.0 H519.200 M517.300 844.6 H519.200 M517.300 879.3 H519.200 M517.300 913.9 H519.200 M517.300 948.6 H519.200 M517.300 983.2 H519.200 M517.300 1017.9 H519.200 " stroke="#8c8c8c" stroke-width="1.500" fill="none"/></svg><svg class="a" style="left:725px;top:376px" width="811" height="658" viewBox="725 376 811 658"><defs>
<filter id="tex" x="0" y="0" width="100%" height="100%" color-interpolation-filters="sRGB">
<feTurbulence type="fractalNoise" baseFrequency="0.05" numOctaves="2" seed="11" result="n"/>
<feColorMatrix in="n" type="matrix" values="0 0 0 0 1  0 0 0 0 1  0 0 0 0 1  4 0 0 0 -1.850" result="w"/>
<feComponentTransfer in="w" result="w2"><feFuncA type="linear" slope="0.300"/></feComponentTransfer>
<feColorMatrix in="n" type="matrix" values="0 0 0 0 .1  0 0 0 0 .3  0 0 0 0 .55  0 4 0 0 -1.900" result="k"/>
<feComponentTransfer in="k" result="k2"><feFuncA type="linear" slope="0.280"/></feComponentTransfer>
<feMerge result="m"><feMergeNode in="w2"/><feMergeNode in="k2"/></feMerge>
<feGaussianBlur in="m" stdDeviation="1" result="mb"/>
<feComposite in="mb" in2="SourceGraphic" operator="in" result="mi"/>
<feMerge><feMergeNode in="SourceGraphic"/><feMergeNode in="mi"/></feMerge>
</filter>
<filter id="tex2" x="0" y="0" width="100%" height="100%" color-interpolation-filters="sRGB">
<feTurbulence type="fractalNoise" baseFrequency="0.035" numOctaves="2" seed="5" result="n"/>
<feColorMatrix in="n" type="matrix" values="0 0 0 0 .36  0 0 0 0 .60  0 0 0 0 .80  4 0 0 0 -1.700" result="w"/>
<feComponentTransfer in="w" result="w2"><feFuncA type="linear" slope="0.550"/></feComponentTransfer>
<feGaussianBlur in="w2" stdDeviation="1.500" result="mb"/>
<feComposite in="mb" in2="SourceGraphic" operator="in" result="mi"/>
<feMerge><feMergeNode in="SourceGraphic"/><feMergeNode in="mi"/></feMerge>
</filter>
<filter id="ish" x="-5%" y="-5%" width="110%" height="110%" color-interpolation-filters="sRGB">
<feGaussianBlur in="SourceAlpha" stdDeviation="3.200" result="b"/>
<feComposite in="SourceAlpha" in2="b" operator="out" result="edge"/>
<feGaussianBlur in="edge" stdDeviation="1.200" result="e2"/>
<feColorMatrix in="e2" type="matrix" values="0 0 0 0 .04  0 0 0 0 .12  0 0 0 0 .22  0 0 0 1.500 0" result="sh"/>
<feComposite in="sh" in2="SourceAlpha" operator="in" result="shi"/>
<feMerge><feMergeNode in="SourceGraphic"/><feMergeNode in="shi"/></feMerge>
</filter>
<filter id="ds" x="-10%" y="-10%" width="120%" height="120%"><feGaussianBlur in="SourceAlpha" stdDeviation="2.500" result="b"/><feOffset in="b" dx="0" dy="1.500" result="o"/><feColorMatrix in="o" type="matrix" values="0 0 0 0 .03 0 0 0 0 .1 0 0 0 0 .2 0 0 0 .650 0" result="c"/><feMerge><feMergeNode in="c"/><feMergeNode in="SourceGraphic"/></feMerge></filter>
<radialGradient id="bub" cx=".45" cy=".42" r=".62"><stop offset="0" stop-color="#6fbbdd"/><stop offset=".7" stop-color="#5aa9d2"/><stop offset="1" stop-color="#3a86ad"/></radialGradient><radialGradient id="ball" cx=".45" cy=".4" r=".6"><stop offset="0" stop-color="#e4f6fa"/><stop offset=".6" stop-color="#a9d8e4"/><stop offset="1" stop-color="#5e93a3"/></radialGradient>
</defs><clipPath id="cO"><path d="M1012.5 626.0C1012.9 620.3 1014.5 615.0 1017.4 610.0C1020.2 605.0 1025.0 600.3 1029.6 595.7C1034.2 591.1 1038.5 587.1 1045.2 582.6C1051.9 578.1 1060.9 572.6 1069.6 568.7C1078.3 564.9 1088.8 561.4 1097.5 559.5C1106.2 557.6 1114.0 557.1 1121.8 557.5C1129.6 557.9 1137.2 559.6 1144.4 561.8C1151.7 564.0 1158.0 566.5 1165.3 570.5C1172.6 574.5 1180.8 580.4 1188.0 586.0C1195.2 591.6 1202.6 598.7 1208.8 604.4C1215.0 610.1 1219.0 613.8 1225.0 620.0C1231.0 626.2 1237.3 634.3 1244.7 641.4C1252.1 648.5 1261.1 656.1 1269.3 662.7C1277.5 669.3 1287.2 675.9 1294.0 680.8C1300.8 685.7 1304.9 688.5 1310.4 692.3C1315.9 696.1 1321.4 699.7 1326.9 703.8C1332.4 707.9 1338.4 712.6 1343.3 717.0C1348.2 721.4 1352.3 724.9 1356.4 730.1C1360.5 735.3 1364.4 741.9 1368.0 748.2C1371.6 754.5 1375.1 761.4 1377.8 768.0C1380.5 774.6 1382.7 782.8 1384.0 788.0C1385.3 793.2 1385.5 794.5 1385.6 799.0C1385.7 803.5 1385.5 809.5 1384.4 814.8C1383.3 820.1 1381.6 826.0 1379.2 831.0C1376.8 836.0 1373.9 841.1 1370.0 845.0C1366.1 848.9 1361.2 851.6 1356.0 854.3C1350.8 857.0 1344.4 858.9 1338.6 861.2C1332.8 863.5 1328.0 865.5 1321.2 868.2C1314.4 870.9 1305.7 874.6 1298.0 877.5C1290.3 880.4 1282.5 883.2 1274.8 885.6C1267.1 888.0 1259.4 890.5 1251.6 892.0C1243.8 893.5 1237.3 894.4 1228.0 894.3C1218.7 894.2 1206.2 893.3 1196.0 891.2C1185.8 889.1 1176.7 885.8 1167.0 881.8C1157.3 877.8 1146.5 872.2 1138.0 867.3C1129.5 862.4 1124.1 859.4 1115.8 852.5C1107.5 845.6 1095.3 835.6 1088.0 826.0C1080.7 816.4 1075.6 805.2 1072.0 795.0C1068.4 784.8 1068.4 775.0 1066.4 765.0C1064.4 755.0 1063.2 744.7 1060.0 735.0C1056.8 725.3 1051.2 715.4 1047.0 707.0C1042.8 698.6 1038.9 691.9 1034.8 684.4C1030.7 676.9 1025.9 668.5 1022.6 661.8C1019.3 655.1 1016.5 650.4 1014.8 644.4C1013.1 638.4 1012.1 631.7 1012.5 626.0Z"/></clipPath><clipPath id="c3"><path d="M1352 714C1351.8 715.7 1350.7 720.5 1351.0 724.0C1351.3 727.5 1353.1 729.0 1354.0 735.0C1354.9 741.0 1355.9 750.5 1356.4 759.7C1357.0 768.9 1357.2 781.8 1357.3 790.0C1357.4 798.2 1358.4 803.9 1357.2 809.0C1356.0 814.1 1353.3 817.3 1350.2 820.6C1347.1 823.9 1343.4 826.2 1338.6 828.7C1333.8 831.2 1328.0 833.4 1321.2 835.7C1314.4 838.0 1305.7 840.6 1298.0 842.7C1290.3 844.8 1282.5 847.0 1274.8 848.5C1267.1 850.0 1259.9 850.9 1251.6 851.4C1243.3 851.9 1234.3 851.7 1225.0 851.5C1215.7 851.3 1205.7 850.8 1196.0 850.0C1186.3 849.2 1175.5 847.6 1167.0 847.0C1158.5 846.4 1151.8 846.0 1145.3 846.3C1138.8 846.5 1133.0 847.2 1127.9 848.5C1122.8 849.8 1119.5 851.7 1114.8 854.3C1110.1 856.9 1102.5 862.4 1100.0 864.0L950 900L950 500L1352 500Z"/></clipPath><clipPath id="c2"><path d="M1309 670C1309.2 673.3 1309.8 681.9 1310.0 690.0C1310.2 698.1 1310.1 709.7 1310.0 718.6C1309.9 727.5 1309.9 735.1 1309.6 743.3C1309.3 751.5 1308.9 761.9 1308.0 768.0C1307.1 774.1 1305.5 776.3 1304.4 780.0C1303.3 783.7 1303.2 786.7 1301.5 790.4C1299.8 794.1 1297.4 798.5 1294.5 802.0C1291.6 805.5 1288.2 808.6 1284.0 811.3C1279.8 814.0 1274.4 816.6 1269.0 818.3C1263.6 819.9 1258.9 820.4 1251.6 821.2C1244.3 822.0 1233.6 823.1 1225.0 823.0C1216.4 822.9 1207.5 821.6 1200.0 820.5C1192.5 819.4 1187.8 818.0 1180.0 816.4C1172.2 814.8 1160.4 812.3 1153.3 810.6C1146.2 808.9 1142.5 807.9 1137.4 806.2C1132.3 804.5 1127.2 802.8 1122.8 800.4C1118.4 798.0 1114.6 794.8 1111.2 791.7C1107.8 788.6 1104.9 785.2 1102.5 781.6C1100.1 778.0 1098.6 774.4 1096.7 770.0C1094.8 765.6 1092.8 760.2 1090.9 755.4C1089.0 750.5 1087.3 745.5 1085.1 740.9C1082.9 736.3 1081.0 731.5 1077.9 727.9C1074.8 724.3 1070.7 722.1 1066.3 719.2C1061.9 716.3 1056.5 713.0 1051.8 710.5C1047.1 708.0 1040.3 705.1 1038.0 704.0L990 640L1000 570L1035 578C1036.7 578.8 1041.5 581.0 1045.2 582.6C1048.9 584.2 1051.9 586.2 1057.4 587.9C1062.9 589.6 1070.5 591.8 1078.3 593.0C1086.1 594.2 1096.6 595.4 1104.4 595.3C1112.2 595.2 1118.6 594.2 1125.3 592.2C1132.0 590.2 1137.7 587.1 1144.4 583.5C1151.1 579.9 1159.7 574.2 1165.3 570.5C1170.9 566.8 1175.9 562.6 1178.0 561.0L1250 560Z"/></clipPath><path d="M1012.5 626.0C1012.9 620.3 1014.5 615.0 1017.4 610.0C1020.2 605.0 1025.0 600.3 1029.6 595.7C1034.2 591.1 1038.5 587.1 1045.2 582.6C1051.9 578.1 1060.9 572.6 1069.6 568.7C1078.3 564.9 1088.8 561.4 1097.5 559.5C1106.2 557.6 1114.0 557.1 1121.8 557.5C1129.6 557.9 1137.2 559.6 1144.4 561.8C1151.7 564.0 1158.0 566.5 1165.3 570.5C1172.6 574.5 1180.8 580.4 1188.0 586.0C1195.2 591.6 1202.6 598.7 1208.8 604.4C1215.0 610.1 1219.0 613.8 1225.0 620.0C1231.0 626.2 1237.3 634.3 1244.7 641.4C1252.1 648.5 1261.1 656.1 1269.3 662.7C1277.5 669.3 1287.2 675.9 1294.0 680.8C1300.8 685.7 1304.9 688.5 1310.4 692.3C1315.9 696.1 1321.4 699.7 1326.9 703.8C1332.4 707.9 1338.4 712.6 1343.3 717.0C1348.2 721.4 1352.3 724.9 1356.4 730.1C1360.5 735.3 1364.4 741.9 1368.0 748.2C1371.6 754.5 1375.1 761.4 1377.8 768.0C1380.5 774.6 1382.7 782.8 1384.0 788.0C1385.3 793.2 1385.5 794.5 1385.6 799.0C1385.7 803.5 1385.5 809.5 1384.4 814.8C1383.3 820.1 1381.6 826.0 1379.2 831.0C1376.8 836.0 1373.9 841.1 1370.0 845.0C1366.1 848.9 1361.2 851.6 1356.0 854.3C1350.8 857.0 1344.4 858.9 1338.6 861.2C1332.8 863.5 1328.0 865.5 1321.2 868.2C1314.4 870.9 1305.7 874.6 1298.0 877.5C1290.3 880.4 1282.5 883.2 1274.8 885.6C1267.1 888.0 1259.4 890.5 1251.6 892.0C1243.8 893.5 1237.3 894.4 1228.0 894.3C1218.7 894.2 1206.2 893.3 1196.0 891.2C1185.8 889.1 1176.7 885.8 1167.0 881.8C1157.3 877.8 1146.5 872.2 1138.0 867.3C1129.5 862.4 1124.1 859.4 1115.8 852.5C1107.5 845.6 1095.3 835.6 1088.0 826.0C1080.7 816.4 1075.6 805.2 1072.0 795.0C1068.4 784.8 1068.4 775.0 1066.4 765.0C1064.4 755.0 1063.2 744.7 1060.0 735.0C1056.8 725.3 1051.2 715.4 1047.0 707.0C1042.8 698.6 1038.9 691.9 1034.8 684.4C1030.7 676.9 1025.9 668.5 1022.6 661.8C1019.3 655.1 1016.5 650.4 1014.8 644.4C1013.1 638.4 1012.1 631.7 1012.5 626.0Z" fill="#5b8fa6" opacity=".500" style="filter:blur(2px)"/><path d="M1012.5 626.0C1012.9 620.3 1014.5 615.0 1017.4 610.0C1020.2 605.0 1025.0 600.3 1029.6 595.7C1034.2 591.1 1038.5 587.1 1045.2 582.6C1051.9 578.1 1060.9 572.6 1069.6 568.7C1078.3 564.9 1088.8 561.4 1097.5 559.5C1106.2 557.6 1114.0 557.1 1121.8 557.5C1129.6 557.9 1137.2 559.6 1144.4 561.8C1151.7 564.0 1158.0 566.5 1165.3 570.5C1172.6 574.5 1180.8 580.4 1188.0 586.0C1195.2 591.6 1202.6 598.7 1208.8 604.4C1215.0 610.1 1219.0 613.8 1225.0 620.0C1231.0 626.2 1237.3 634.3 1244.7 641.4C1252.1 648.5 1261.1 656.1 1269.3 662.7C1277.5 669.3 1287.2 675.9 1294.0 680.8C1300.8 685.7 1304.9 688.5 1310.4 692.3C1315.9 696.1 1321.4 699.7 1326.9 703.8C1332.4 707.9 1338.4 712.6 1343.3 717.0C1348.2 721.4 1352.3 724.9 1356.4 730.1C1360.5 735.3 1364.4 741.9 1368.0 748.2C1371.6 754.5 1375.1 761.4 1377.8 768.0C1380.5 774.6 1382.7 782.8 1384.0 788.0C1385.3 793.2 1385.5 794.5 1385.6 799.0C1385.7 803.5 1385.5 809.5 1384.4 814.8C1383.3 820.1 1381.6 826.0 1379.2 831.0C1376.8 836.0 1373.9 841.1 1370.0 845.0C1366.1 848.9 1361.2 851.6 1356.0 854.3C1350.8 857.0 1344.4 858.9 1338.6 861.2C1332.8 863.5 1328.0 865.5 1321.2 868.2C1314.4 870.9 1305.7 874.6 1298.0 877.5C1290.3 880.4 1282.5 883.2 1274.8 885.6C1267.1 888.0 1259.4 890.5 1251.6 892.0C1243.8 893.5 1237.3 894.4 1228.0 894.3C1218.7 894.2 1206.2 893.3 1196.0 891.2C1185.8 889.1 1176.7 885.8 1167.0 881.8C1157.3 877.8 1146.5 872.2 1138.0 867.3C1129.5 862.4 1124.1 859.4 1115.8 852.5C1107.5 845.6 1095.3 835.6 1088.0 826.0C1080.7 816.4 1075.6 805.2 1072.0 795.0C1068.4 784.8 1068.4 775.0 1066.4 765.0C1064.4 755.0 1063.2 744.7 1060.0 735.0C1056.8 725.3 1051.2 715.4 1047.0 707.0C1042.8 698.6 1038.9 691.9 1034.8 684.4C1030.7 676.9 1025.9 668.5 1022.6 661.8C1019.3 655.1 1016.5 650.4 1014.8 644.4C1013.1 638.4 1012.1 631.7 1012.5 626.0Z" fill="#9ae3f1" filter="url(#tex)"/><g clip-path="url(#cO)"><path d="M1012.5 626.0C1012.9 620.3 1014.5 615.0 1017.4 610.0C1020.2 605.0 1025.0 600.3 1029.6 595.7C1034.2 591.1 1038.5 587.1 1045.2 582.6C1051.9 578.1 1060.9 572.6 1069.6 568.7C1078.3 564.9 1088.8 561.4 1097.5 559.5C1106.2 557.6 1114.0 557.1 1121.8 557.5C1129.6 557.9 1137.2 559.6 1144.4 561.8C1151.7 564.0 1158.0 566.5 1165.3 570.5C1172.6 574.5 1180.8 580.4 1188.0 586.0C1195.2 591.6 1202.6 598.7 1208.8 604.4C1215.0 610.1 1219.0 613.8 1225.0 620.0C1231.0 626.2 1237.3 634.3 1244.7 641.4C1252.1 648.5 1261.1 656.1 1269.3 662.7C1277.5 669.3 1287.2 675.9 1294.0 680.8C1300.8 685.7 1304.9 688.5 1310.4 692.3C1315.9 696.1 1321.4 699.7 1326.9 703.8C1332.4 707.9 1338.4 712.6 1343.3 717.0C1348.2 721.4 1352.3 724.9 1356.4 730.1C1360.5 735.3 1364.4 741.9 1368.0 748.2C1371.6 754.5 1375.1 761.4 1377.8 768.0C1380.5 774.6 1382.7 782.8 1384.0 788.0C1385.3 793.2 1385.5 794.5 1385.6 799.0C1385.7 803.5 1385.5 809.5 1384.4 814.8C1383.3 820.1 1381.6 826.0 1379.2 831.0C1376.8 836.0 1373.9 841.1 1370.0 845.0C1366.1 848.9 1361.2 851.6 1356.0 854.3C1350.8 857.0 1344.4 858.9 1338.6 861.2C1332.8 863.5 1328.0 865.5 1321.2 868.2C1314.4 870.9 1305.7 874.6 1298.0 877.5C1290.3 880.4 1282.5 883.2 1274.8 885.6C1267.1 888.0 1259.4 890.5 1251.6 892.0C1243.8 893.5 1237.3 894.4 1228.0 894.3C1218.7 894.2 1206.2 893.3 1196.0 891.2C1185.8 889.1 1176.7 885.8 1167.0 881.8C1157.3 877.8 1146.5 872.2 1138.0 867.3C1129.5 862.4 1124.1 859.4 1115.8 852.5C1107.5 845.6 1095.3 835.6 1088.0 826.0C1080.7 816.4 1075.6 805.2 1072.0 795.0C1068.4 784.8 1068.4 775.0 1066.4 765.0C1064.4 755.0 1063.2 744.7 1060.0 735.0C1056.8 725.3 1051.2 715.4 1047.0 707.0C1042.8 698.6 1038.9 691.9 1034.8 684.4C1030.7 676.9 1025.9 668.5 1022.6 661.8C1019.3 655.1 1016.5 650.4 1014.8 644.4C1013.1 638.4 1012.1 631.7 1012.5 626.0Z" fill="none" stroke="#0b2238" stroke-width="6" opacity="0.45" style="filter:blur(2px)"/><path d="M1352 714C1351.8 715.7 1350.7 720.5 1351.0 724.0C1351.3 727.5 1353.1 729.0 1354.0 735.0C1354.9 741.0 1355.9 750.5 1356.4 759.7C1357.0 768.9 1357.2 781.8 1357.3 790.0C1357.4 798.2 1358.4 803.9 1357.2 809.0C1356.0 814.1 1353.3 817.3 1350.2 820.6C1347.1 823.9 1343.4 826.2 1338.6 828.7C1333.8 831.2 1328.0 833.4 1321.2 835.7C1314.4 838.0 1305.7 840.6 1298.0 842.7C1290.3 844.8 1282.5 847.0 1274.8 848.5C1267.1 850.0 1259.9 850.9 1251.6 851.4C1243.3 851.9 1234.3 851.7 1225.0 851.5C1215.7 851.3 1205.7 850.8 1196.0 850.0C1186.3 849.2 1175.5 847.6 1167.0 847.0C1158.5 846.4 1151.8 846.0 1145.3 846.3C1138.8 846.5 1133.0 847.2 1127.9 848.5C1122.8 849.8 1119.5 851.7 1114.8 854.3C1110.1 856.9 1102.5 862.4 1100.0 864.0L950 900L950 500L1352 500Z" fill="#58a2d4" filter="url(#tex)"/><g clip-path="url(#c3)"><path d="M1352 714C1351.8 715.7 1350.7 720.5 1351.0 724.0C1351.3 727.5 1353.1 729.0 1354.0 735.0C1354.9 741.0 1355.9 750.5 1356.4 759.7C1357.0 768.9 1357.2 781.8 1357.3 790.0C1357.4 798.2 1358.4 803.9 1357.2 809.0C1356.0 814.1 1353.3 817.3 1350.2 820.6C1347.1 823.9 1343.4 826.2 1338.6 828.7C1333.8 831.2 1328.0 833.4 1321.2 835.7C1314.4 838.0 1305.7 840.6 1298.0 842.7C1290.3 844.8 1282.5 847.0 1274.8 848.5C1267.1 850.0 1259.9 850.9 1251.6 851.4C1243.3 851.9 1234.3 851.7 1225.0 851.5C1215.7 851.3 1205.7 850.8 1196.0 850.0C1186.3 849.2 1175.5 847.6 1167.0 847.0C1158.5 846.4 1151.8 846.0 1145.3 846.3C1138.8 846.5 1133.0 847.2 1127.9 848.5C1122.8 849.8 1119.5 851.7 1114.8 854.3C1110.1 856.9 1102.5 862.4 1100.0 864.0L950 900L950 500L1352 500Z" fill="none" stroke="#0b2238" stroke-width="8" opacity="0.55" style="filter:blur(2.5px)"/><path d="M1012.5 626.0C1012.9 620.3 1014.5 615.0 1017.4 610.0C1020.2 605.0 1025.0 600.3 1029.6 595.7C1034.2 591.1 1038.5 587.1 1045.2 582.6C1051.9 578.1 1060.9 572.6 1069.6 568.7C1078.3 564.9 1088.8 561.4 1097.5 559.5C1106.2 557.6 1114.0 557.1 1121.8 557.5C1129.6 557.9 1137.2 559.6 1144.4 561.8C1151.7 564.0 1158.0 566.5 1165.3 570.5C1172.6 574.5 1180.8 580.4 1188.0 586.0C1195.2 591.6 1202.6 598.7 1208.8 604.4C1215.0 610.1 1219.0 613.8 1225.0 620.0C1231.0 626.2 1237.3 634.3 1244.7 641.4C1252.1 648.5 1261.1 656.1 1269.3 662.7C1277.5 669.3 1287.2 675.9 1294.0 680.8C1300.8 685.7 1304.9 688.5 1310.4 692.3C1315.9 696.1 1321.4 699.7 1326.9 703.8C1332.4 707.9 1338.4 712.6 1343.3 717.0C1348.2 721.4 1352.3 724.9 1356.4 730.1C1360.5 735.3 1364.4 741.9 1368.0 748.2C1371.6 754.5 1375.1 761.4 1377.8 768.0C1380.5 774.6 1382.7 782.8 1384.0 788.0C1385.3 793.2 1385.5 794.5 1385.6 799.0C1385.7 803.5 1385.5 809.5 1384.4 814.8C1383.3 820.1 1381.6 826.0 1379.2 831.0C1376.8 836.0 1373.9 841.1 1370.0 845.0C1366.1 848.9 1361.2 851.6 1356.0 854.3C1350.8 857.0 1344.4 858.9 1338.6 861.2C1332.8 863.5 1328.0 865.5 1321.2 868.2C1314.4 870.9 1305.7 874.6 1298.0 877.5C1290.3 880.4 1282.5 883.2 1274.8 885.6C1267.1 888.0 1259.4 890.5 1251.6 892.0C1243.8 893.5 1237.3 894.4 1228.0 894.3C1218.7 894.2 1206.2 893.3 1196.0 891.2C1185.8 889.1 1176.7 885.8 1167.0 881.8C1157.3 877.8 1146.5 872.2 1138.0 867.3C1129.5 862.4 1124.1 859.4 1115.8 852.5C1107.5 845.6 1095.3 835.6 1088.0 826.0C1080.7 816.4 1075.6 805.2 1072.0 795.0C1068.4 784.8 1068.4 775.0 1066.4 765.0C1064.4 755.0 1063.2 744.7 1060.0 735.0C1056.8 725.3 1051.2 715.4 1047.0 707.0C1042.8 698.6 1038.9 691.9 1034.8 684.4C1030.7 676.9 1025.9 668.5 1022.6 661.8C1019.3 655.1 1016.5 650.4 1014.8 644.4C1013.1 638.4 1012.1 631.7 1012.5 626.0Z" fill="none" stroke="#0b2238" stroke-width="6" opacity="0.4" style="filter:blur(2px)"/><path d="M1309 670C1309.2 673.3 1309.8 681.9 1310.0 690.0C1310.2 698.1 1310.1 709.7 1310.0 718.6C1309.9 727.5 1309.9 735.1 1309.6 743.3C1309.3 751.5 1308.9 761.9 1308.0 768.0C1307.1 774.1 1305.5 776.3 1304.4 780.0C1303.3 783.7 1303.2 786.7 1301.5 790.4C1299.8 794.1 1297.4 798.5 1294.5 802.0C1291.6 805.5 1288.2 808.6 1284.0 811.3C1279.8 814.0 1274.4 816.6 1269.0 818.3C1263.6 819.9 1258.9 820.4 1251.6 821.2C1244.3 822.0 1233.6 823.1 1225.0 823.0C1216.4 822.9 1207.5 821.6 1200.0 820.5C1192.5 819.4 1187.8 818.0 1180.0 816.4C1172.2 814.8 1160.4 812.3 1153.3 810.6C1146.2 808.9 1142.5 807.9 1137.4 806.2C1132.3 804.5 1127.2 802.8 1122.8 800.4C1118.4 798.0 1114.6 794.8 1111.2 791.7C1107.8 788.6 1104.9 785.2 1102.5 781.6C1100.1 778.0 1098.6 774.4 1096.7 770.0C1094.8 765.6 1092.8 760.2 1090.9 755.4C1089.0 750.5 1087.3 745.5 1085.1 740.9C1082.9 736.3 1081.0 731.5 1077.9 727.9C1074.8 724.3 1070.7 722.1 1066.3 719.2C1061.9 716.3 1056.5 713.0 1051.8 710.5C1047.1 708.0 1040.3 705.1 1038.0 704.0L990 640L1000 570L1035 578C1036.7 578.8 1041.5 581.0 1045.2 582.6C1048.9 584.2 1051.9 586.2 1057.4 587.9C1062.9 589.6 1070.5 591.8 1078.3 593.0C1086.1 594.2 1096.6 595.4 1104.4 595.3C1112.2 595.2 1118.6 594.2 1125.3 592.2C1132.0 590.2 1137.7 587.1 1144.4 583.5C1151.1 579.9 1159.7 574.2 1165.3 570.5C1170.9 566.8 1175.9 562.6 1178.0 561.0L1250 560Z" fill="#39689a" filter="url(#tex2)"/><g clip-path="url(#c2)"><path d="M1309 670C1309.2 673.3 1309.8 681.9 1310.0 690.0C1310.2 698.1 1310.1 709.7 1310.0 718.6C1309.9 727.5 1309.9 735.1 1309.6 743.3C1309.3 751.5 1308.9 761.9 1308.0 768.0C1307.1 774.1 1305.5 776.3 1304.4 780.0C1303.3 783.7 1303.2 786.7 1301.5 790.4C1299.8 794.1 1297.4 798.5 1294.5 802.0C1291.6 805.5 1288.2 808.6 1284.0 811.3C1279.8 814.0 1274.4 816.6 1269.0 818.3C1263.6 819.9 1258.9 820.4 1251.6 821.2C1244.3 822.0 1233.6 823.1 1225.0 823.0C1216.4 822.9 1207.5 821.6 1200.0 820.5C1192.5 819.4 1187.8 818.0 1180.0 816.4C1172.2 814.8 1160.4 812.3 1153.3 810.6C1146.2 808.9 1142.5 807.9 1137.4 806.2C1132.3 804.5 1127.2 802.8 1122.8 800.4C1118.4 798.0 1114.6 794.8 1111.2 791.7C1107.8 788.6 1104.9 785.2 1102.5 781.6C1100.1 778.0 1098.6 774.4 1096.7 770.0C1094.8 765.6 1092.8 760.2 1090.9 755.4C1089.0 750.5 1087.3 745.5 1085.1 740.9C1082.9 736.3 1081.0 731.5 1077.9 727.9C1074.8 724.3 1070.7 722.1 1066.3 719.2C1061.9 716.3 1056.5 713.0 1051.8 710.5C1047.1 708.0 1040.3 705.1 1038.0 704.0L990 640L1000 570L1035 578C1036.7 578.8 1041.5 581.0 1045.2 582.6C1048.9 584.2 1051.9 586.2 1057.4 587.9C1062.9 589.6 1070.5 591.8 1078.3 593.0C1086.1 594.2 1096.6 595.4 1104.4 595.3C1112.2 595.2 1118.6 594.2 1125.3 592.2C1132.0 590.2 1137.7 587.1 1144.4 583.5C1151.1 579.9 1159.7 574.2 1165.3 570.5C1170.9 566.8 1175.9 562.6 1178.0 561.0L1250 560Z" fill="none" stroke="#0b2238" stroke-width="9" opacity="0.6" style="filter:blur(2.8px)"/><path d="M1012.5 626.0C1012.9 620.3 1014.5 615.0 1017.4 610.0C1020.2 605.0 1025.0 600.3 1029.6 595.7C1034.2 591.1 1038.5 587.1 1045.2 582.6C1051.9 578.1 1060.9 572.6 1069.6 568.7C1078.3 564.9 1088.8 561.4 1097.5 559.5C1106.2 557.6 1114.0 557.1 1121.8 557.5C1129.6 557.9 1137.2 559.6 1144.4 561.8C1151.7 564.0 1158.0 566.5 1165.3 570.5C1172.6 574.5 1180.8 580.4 1188.0 586.0C1195.2 591.6 1202.6 598.7 1208.8 604.4C1215.0 610.1 1219.0 613.8 1225.0 620.0C1231.0 626.2 1237.3 634.3 1244.7 641.4C1252.1 648.5 1261.1 656.1 1269.3 662.7C1277.5 669.3 1287.2 675.9 1294.0 680.8C1300.8 685.7 1304.9 688.5 1310.4 692.3C1315.9 696.1 1321.4 699.7 1326.9 703.8C1332.4 707.9 1338.4 712.6 1343.3 717.0C1348.2 721.4 1352.3 724.9 1356.4 730.1C1360.5 735.3 1364.4 741.9 1368.0 748.2C1371.6 754.5 1375.1 761.4 1377.8 768.0C1380.5 774.6 1382.7 782.8 1384.0 788.0C1385.3 793.2 1385.5 794.5 1385.6 799.0C1385.7 803.5 1385.5 809.5 1384.4 814.8C1383.3 820.1 1381.6 826.0 1379.2 831.0C1376.8 836.0 1373.9 841.1 1370.0 845.0C1366.1 848.9 1361.2 851.6 1356.0 854.3C1350.8 857.0 1344.4 858.9 1338.6 861.2C1332.8 863.5 1328.0 865.5 1321.2 868.2C1314.4 870.9 1305.7 874.6 1298.0 877.5C1290.3 880.4 1282.5 883.2 1274.8 885.6C1267.1 888.0 1259.4 890.5 1251.6 892.0C1243.8 893.5 1237.3 894.4 1228.0 894.3C1218.7 894.2 1206.2 893.3 1196.0 891.2C1185.8 889.1 1176.7 885.8 1167.0 881.8C1157.3 877.8 1146.5 872.2 1138.0 867.3C1129.5 862.4 1124.1 859.4 1115.8 852.5C1107.5 845.6 1095.3 835.6 1088.0 826.0C1080.7 816.4 1075.6 805.2 1072.0 795.0C1068.4 784.8 1068.4 775.0 1066.4 765.0C1064.4 755.0 1063.2 744.7 1060.0 735.0C1056.8 725.3 1051.2 715.4 1047.0 707.0C1042.8 698.6 1038.9 691.9 1034.8 684.4C1030.7 676.9 1025.9 668.5 1022.6 661.8C1019.3 655.1 1016.5 650.4 1014.8 644.4C1013.1 638.4 1012.1 631.7 1012.5 626.0Z" fill="none" stroke="#0b2238" stroke-width="6" opacity="0.45" style="filter:blur(2px)"/><path d="M1303 668C1302.8 671.0 1302.5 680.7 1302.0 686.0C1301.5 691.3 1300.7 694.0 1300.0 700.0C1299.3 706.0 1299.0 714.0 1298.0 722.0C1297.0 730.0 1296.2 740.0 1294.0 748.0C1291.8 756.0 1288.7 764.0 1285.0 770.0C1281.3 776.0 1277.0 780.2 1272.0 784.0C1267.0 787.8 1261.0 790.8 1255.0 793.0C1249.0 795.2 1243.2 796.3 1236.0 797.0C1228.8 797.7 1220.7 797.8 1212.0 797.0C1203.3 796.2 1193.0 794.2 1184.0 792.0C1175.0 789.8 1165.3 786.8 1158.0 784.0C1150.7 781.2 1145.0 778.3 1140.0 775.0C1135.0 771.7 1131.5 768.2 1128.0 764.0C1124.5 759.8 1121.8 755.0 1119.0 750.0C1116.2 745.0 1114.0 739.2 1111.0 734.0C1108.0 728.8 1104.8 723.5 1101.0 719.0C1097.2 714.5 1093.2 710.5 1088.0 707.0C1082.8 703.5 1076.0 700.5 1070.0 698.0C1064.0 695.5 1057.8 693.7 1052.0 692.0C1046.2 690.3 1037.8 688.7 1035.0 688.0L990 640L1000 570L1035 578C1036.7 578.8 1041.5 581.0 1045.2 582.6C1048.9 584.2 1051.9 586.2 1057.4 587.9C1062.9 589.6 1070.5 591.8 1078.3 593.0C1086.1 594.2 1096.6 595.4 1104.4 595.3C1112.2 595.2 1118.6 594.2 1125.3 592.2C1132.0 590.2 1137.7 587.1 1144.4 583.5C1151.1 579.9 1159.7 574.2 1165.3 570.5C1170.9 566.8 1175.9 562.6 1178.0 561.0L1250 560Z" fill="#34608b" style="filter:blur(5px)"/></g></g></g><path d="M1012.5 626.0C1012.9 620.3 1014.5 615.0 1017.4 610.0C1020.2 605.0 1025.0 600.3 1029.6 595.7C1034.2 591.1 1038.5 587.1 1045.2 582.6C1051.9 578.1 1060.9 572.6 1069.6 568.7C1078.3 564.9 1088.8 561.4 1097.5 559.5C1106.2 557.6 1114.0 557.1 1121.8 557.5C1129.6 557.9 1137.2 559.6 1144.4 561.8C1151.7 564.0 1158.0 566.5 1165.3 570.5C1172.6 574.5 1180.8 580.4 1188.0 586.0C1195.2 591.6 1202.6 598.7 1208.8 604.4C1215.0 610.1 1219.0 613.8 1225.0 620.0C1231.0 626.2 1237.3 634.3 1244.7 641.4C1252.1 648.5 1261.1 656.1 1269.3 662.7C1277.5 669.3 1287.2 675.9 1294.0 680.8C1300.8 685.7 1304.9 688.5 1310.4 692.3C1315.9 696.1 1321.4 699.7 1326.9 703.8C1332.4 707.9 1338.4 712.6 1343.3 717.0C1348.2 721.4 1352.3 724.9 1356.4 730.1C1360.5 735.3 1364.4 741.9 1368.0 748.2C1371.6 754.5 1375.1 761.4 1377.8 768.0C1380.5 774.6 1382.7 782.8 1384.0 788.0C1385.3 793.2 1385.5 794.5 1385.6 799.0C1385.7 803.5 1385.5 809.5 1384.4 814.8C1383.3 820.1 1381.6 826.0 1379.2 831.0C1376.8 836.0 1373.9 841.1 1370.0 845.0C1366.1 848.9 1361.2 851.6 1356.0 854.3C1350.8 857.0 1344.4 858.9 1338.6 861.2C1332.8 863.5 1328.0 865.5 1321.2 868.2C1314.4 870.9 1305.7 874.6 1298.0 877.5C1290.3 880.4 1282.5 883.2 1274.8 885.6C1267.1 888.0 1259.4 890.5 1251.6 892.0C1243.8 893.5 1237.3 894.4 1228.0 894.3C1218.7 894.2 1206.2 893.3 1196.0 891.2C1185.8 889.1 1176.7 885.8 1167.0 881.8C1157.3 877.8 1146.5 872.2 1138.0 867.3C1129.5 862.4 1124.1 859.4 1115.8 852.5C1107.5 845.6 1095.3 835.6 1088.0 826.0C1080.7 816.4 1075.6 805.2 1072.0 795.0C1068.4 784.8 1068.4 775.0 1066.4 765.0C1064.4 755.0 1063.2 744.7 1060.0 735.0C1056.8 725.3 1051.2 715.4 1047.0 707.0C1042.8 698.6 1038.9 691.9 1034.8 684.4C1030.7 676.9 1025.9 668.5 1022.6 661.8C1019.3 655.1 1016.5 650.4 1014.8 644.4C1013.1 638.4 1012.1 631.7 1012.5 626.0Z" fill="none" stroke="#1e4a66" stroke-width="1.100" opacity=".550"/><circle cx="1098" cy="808.500" r="4.300" fill="#1f3448"/><circle cx="1110.600" cy="820.200" r="5.700" fill="#3a6a86" stroke="#2a4e66" stroke-width="1"/><circle cx="1170" cy="856.200" r="3.400" fill="#1f3448"/><circle cx="1186.300" cy="864" r="7.800" fill="#4a8ea8" stroke="#33687e" stroke-width="1.200"/><circle cx="1323" cy="797.500" r="8.300" fill="#4a8aa6" stroke="#33687e" stroke-width="1.200"/><clipPath id="smc"><path d="M1279.5 583.3C1279.0 577.2 1280.3 571.5 1283.2 566.8C1286.1 562.0 1291.0 557.6 1297.0 554.8C1303.0 552.0 1310.7 550.2 1319.0 550.2C1327.3 550.2 1337.7 552.8 1346.6 554.8C1355.5 556.8 1365.1 559.4 1372.4 562.2C1379.8 565.0 1385.8 566.6 1390.7 571.4C1395.6 576.1 1399.2 583.2 1401.8 590.7C1404.4 598.2 1406.4 608.1 1406.4 616.4C1406.4 624.7 1404.1 633.2 1401.8 640.3C1399.5 647.3 1396.9 654.0 1392.6 658.7C1388.3 663.5 1381.8 667.1 1376.0 668.8C1370.2 670.5 1363.7 670.0 1357.6 668.8C1351.5 667.6 1345.7 664.9 1339.3 661.4C1332.9 657.9 1325.4 653.6 1319.0 647.6C1312.6 641.6 1306.2 633.0 1300.7 625.6C1295.2 618.2 1289.5 610.5 1286.0 603.5C1282.5 596.5 1280.0 589.4 1279.5 583.3Z"/></clipPath><clipPath id="smm"><path d="M1270 540 H1395 L1392 565 C1383 579 1378 585 1374.200 590.700 C1368 600 1364 608 1361.300 614.600 C1357 626 1354.500 634 1353 640.300 C1351 650 1350 660 1349.400 667 L1349 690 H1270Z"/></clipPath><clipPath id="smn"><path d="M1270 540 H1376 L1373 556 C1364 568 1358 575 1354 579.600 C1346 589 1340 597 1335.600 603.500 C1330 612 1326 619 1322.700 625.600 C1319 634 1317 642 1316.300 648.600 L1315 690 H1270Z"/></clipPath><path d="M1279.5 583.3C1279.0 577.2 1280.3 571.5 1283.2 566.8C1286.1 562.0 1291.0 557.6 1297.0 554.8C1303.0 552.0 1310.7 550.2 1319.0 550.2C1327.3 550.2 1337.7 552.8 1346.6 554.8C1355.5 556.8 1365.1 559.4 1372.4 562.2C1379.8 565.0 1385.8 566.6 1390.7 571.4C1395.6 576.1 1399.2 583.2 1401.8 590.7C1404.4 598.2 1406.4 608.1 1406.4 616.4C1406.4 624.7 1404.1 633.2 1401.8 640.3C1399.5 647.3 1396.9 654.0 1392.6 658.7C1388.3 663.5 1381.8 667.1 1376.0 668.8C1370.2 670.5 1363.7 670.0 1357.6 668.8C1351.5 667.6 1345.7 664.9 1339.3 661.4C1332.9 657.9 1325.4 653.6 1319.0 647.6C1312.6 641.6 1306.2 633.0 1300.7 625.6C1295.2 618.2 1289.5 610.5 1286.0 603.5C1282.5 596.5 1280.0 589.4 1279.5 583.3Z" fill="#5b8fa6" opacity=".500" style="filter:blur(2px)"/><g clip-path="url(#smc)"><rect x="1270" y="540" width="150" height="140" fill="#9ae3f1" filter="url(#tex)"/><path d="M1279.5 583.3C1279.0 577.2 1280.3 571.5 1283.2 566.8C1286.1 562.0 1291.0 557.6 1297.0 554.8C1303.0 552.0 1310.7 550.2 1319.0 550.2C1327.3 550.2 1337.7 552.8 1346.6 554.8C1355.5 556.8 1365.1 559.4 1372.4 562.2C1379.8 565.0 1385.8 566.6 1390.7 571.4C1395.6 576.1 1399.2 583.2 1401.8 590.7C1404.4 598.2 1406.4 608.1 1406.4 616.4C1406.4 624.7 1404.1 633.2 1401.8 640.3C1399.5 647.3 1396.9 654.0 1392.6 658.7C1388.3 663.5 1381.8 667.1 1376.0 668.8C1370.2 670.5 1363.7 670.0 1357.6 668.8C1351.5 667.6 1345.7 664.9 1339.3 661.4C1332.9 657.9 1325.4 653.6 1319.0 647.6C1312.6 641.6 1306.2 633.0 1300.7 625.6C1295.2 618.2 1289.5 610.5 1286.0 603.5C1282.5 596.5 1280.0 589.4 1279.5 583.3Z" fill="none" stroke="#0b2238" stroke-width="6" opacity="0.45" style="filter:blur(2px)"/><path d="M1270 540 H1395 L1392 565 C1383 579 1378 585 1374.200 590.700 C1368 600 1364 608 1361.300 614.600 C1357 626 1354.500 634 1353 640.300 C1351 650 1350 660 1349.400 667 L1349 690 H1270Z" fill="#58a2d4" filter="url(#tex)"/><g clip-path="url(#smm)"><path d="M1270 540 H1395 L1392 565 C1383 579 1378 585 1374.200 590.700 C1368 600 1364 608 1361.300 614.600 C1357 626 1354.500 634 1353 640.300 C1351 650 1350 660 1349.400 667 L1349 690 H1270Z" fill="none" stroke="#0b2238" stroke-width="7" opacity="0.55" style="filter:blur(2.2px)"/><path d="M1279.5 583.3C1279.0 577.2 1280.3 571.5 1283.2 566.8C1286.1 562.0 1291.0 557.6 1297.0 554.8C1303.0 552.0 1310.7 550.2 1319.0 550.2C1327.3 550.2 1337.7 552.8 1346.6 554.8C1355.5 556.8 1365.1 559.4 1372.4 562.2C1379.8 565.0 1385.8 566.6 1390.7 571.4C1395.6 576.1 1399.2 583.2 1401.8 590.7C1404.4 598.2 1406.4 608.1 1406.4 616.4C1406.4 624.7 1404.1 633.2 1401.8 640.3C1399.5 647.3 1396.9 654.0 1392.6 658.7C1388.3 663.5 1381.8 667.1 1376.0 668.8C1370.2 670.5 1363.7 670.0 1357.6 668.8C1351.5 667.6 1345.7 664.9 1339.3 661.4C1332.9 657.9 1325.4 653.6 1319.0 647.6C1312.6 641.6 1306.2 633.0 1300.7 625.6C1295.2 618.2 1289.5 610.5 1286.0 603.5C1282.5 596.5 1280.0 589.4 1279.5 583.3Z" fill="none" stroke="#0b2238" stroke-width="6" opacity="0.4" style="filter:blur(2px)"/><path d="M1270 540 H1376 L1373 556 C1364 568 1358 575 1354 579.600 C1346 589 1340 597 1335.600 603.500 C1330 612 1326 619 1322.700 625.600 C1319 634 1317 642 1316.300 648.600 L1315 690 H1270Z" fill="#34608b"/><g clip-path="url(#smn)"><path d="M1270 540 H1376 L1373 556 C1364 568 1358 575 1354 579.600 C1346 589 1340 597 1335.600 603.500 C1330 612 1326 619 1322.700 625.600 C1319 634 1317 642 1316.300 648.600 L1315 690 H1270Z" fill="none" stroke="#0b2238" stroke-width="8" opacity="0.55" style="filter:blur(2.5px)"/><path d="M1279.5 583.3C1279.0 577.2 1280.3 571.5 1283.2 566.8C1286.1 562.0 1291.0 557.6 1297.0 554.8C1303.0 552.0 1310.7 550.2 1319.0 550.2C1327.3 550.2 1337.7 552.8 1346.6 554.8C1355.5 556.8 1365.1 559.4 1372.4 562.2C1379.8 565.0 1385.8 566.6 1390.7 571.4C1395.6 576.1 1399.2 583.2 1401.8 590.7C1404.4 598.2 1406.4 608.1 1406.4 616.4C1406.4 624.7 1404.1 633.2 1401.8 640.3C1399.5 647.3 1396.9 654.0 1392.6 658.7C1388.3 663.5 1381.8 667.1 1376.0 668.8C1370.2 670.5 1363.7 670.0 1357.6 668.8C1351.5 667.6 1345.7 664.9 1339.3 661.4C1332.9 657.9 1325.4 653.6 1319.0 647.6C1312.6 641.6 1306.2 633.0 1300.7 625.6C1295.2 618.2 1289.5 610.5 1286.0 603.5C1282.5 596.5 1280.0 589.4 1279.5 583.3Z" fill="none" stroke="#0b2238" stroke-width="6" opacity="0.45" style="filter:blur(2px)"/></g></g></g><path d="M1279.5 583.3C1279.0 577.2 1280.3 571.5 1283.2 566.8C1286.1 562.0 1291.0 557.6 1297.0 554.8C1303.0 552.0 1310.7 550.2 1319.0 550.2C1327.3 550.2 1337.7 552.8 1346.6 554.8C1355.5 556.8 1365.1 559.4 1372.4 562.2C1379.8 565.0 1385.8 566.6 1390.7 571.4C1395.6 576.1 1399.2 583.2 1401.8 590.7C1404.4 598.2 1406.4 608.1 1406.4 616.4C1406.4 624.7 1404.1 633.2 1401.8 640.3C1399.5 647.3 1396.9 654.0 1392.6 658.7C1388.3 663.5 1381.8 667.1 1376.0 668.8C1370.2 670.5 1363.7 670.0 1357.6 668.8C1351.5 667.6 1345.7 664.9 1339.3 661.4C1332.9 657.9 1325.4 653.6 1319.0 647.6C1312.6 641.6 1306.2 633.0 1300.7 625.6C1295.2 618.2 1289.5 610.5 1286.0 603.5C1282.5 596.5 1280.0 589.4 1279.5 583.3Z" fill="none" stroke="#1e4a66" stroke-width="1.100" opacity=".550"/><circle cx="1383.800" cy="619.500" r="8.300" fill="#4d8ea6" stroke="#36707f" stroke-width="1.200"/><circle cx="1370.500" cy="633" r="4" fill="#1f3448"/><circle cx="1259.300" cy="581.500" r="5" fill="#1f2f3f"/><circle cx="1266.700" cy="596.500" r="3" fill="#1f2f3f"/><circle cx="1418.700" cy="615.500" r="3" fill="#1f2f3f"/><circle cx="1370.500" cy="695" r="10" fill="url(#ball)" stroke="#5a8c9c" stroke-width="1.300"/><clipPath id="ovc"><ellipse cx="1013" cy="751.500" rx="19.500" ry="31.500"/></clipPath><g filter="url(#ds)"><g transform="rotate(-17 1013 751.500)"><ellipse cx="1013" cy="751.500" rx="19.500" ry="31.500" fill="url(#bub)"/><g clip-path="url(#ovc)"><ellipse cx="988" cy="751.500" rx="17" ry="40" fill="#b4e8f2"/><ellipse cx="988" cy="751.500" rx="17" ry="40" fill="none" stroke="#2e6a88" stroke-width="1.500" opacity=".600"/></g></g></g><ellipse cx="1013" cy="751.500" rx="19.500" ry="31.500" transform="rotate(-17 1013 751.500)" fill="none" stroke="#2e6a88" stroke-width="1.300" opacity=".700"/><g filter="url(#ds)"><circle cx="1034.800" cy="806.600" r="14" fill="url(#bub)"/></g><circle cx="1034.800" cy="806.600" r="14" fill="none" stroke="#2e6a88" stroke-width="1.300" opacity=".700"/><circle cx="1034.300" cy="828.800" r="2.600" fill="#1f2f3f"/><rect x="1112" y="655.500" width="133" height="129" rx="22" fill="#0c2236" opacity=".350" style="filter:blur(3px)"/><rect x="1113" y="655.200" width="131.300" height="127.600" rx="21" fill="#fff"/><rect x="1118" y="660.200" width="122" height="117.500" rx="16.500" fill="#ee5a9d"/><path d="M1164.500 678 H1186.500 L1198.200 689.500 V726 Q1198.200 728.100 1196 728.100 H1164.500 Q1162.600 728.100 1162.600 726 V680 Q1162.600 678 1164.500 678Z" fill="none" stroke="#fff" stroke-width="5" stroke-linejoin="round"/><path d="M1184.500 677 V691.500 H1199" fill="none" stroke="#fff" stroke-width="4"/><path d="M1169.600 703.500 H1190.600 M1169.600 712.700 H1190.600" stroke="#fff" stroke-width="4.800"/><path d="M1138.500 747.500 Q1138.500 746.500 1139.500 746.500 H1152 C1158 741 1164 739.800 1172 739.800 H1186 C1190.500 739.800 1190.500 746.800 1186 746.800 L1173.500 747 C1171.500 747 1171.500 750 1173.500 750 L1191 750 L1208.500 740.500 C1212 738.500 1215.500 742.500 1212.500 745.500 L1193 759.500 C1191 761 1189.500 761.500 1187 761.500 H1139.500 Q1138.500 761.500 1138.500 760.500Z" fill="#fff"/></svg><svg class="a" style="left:56px;top:560px;filter:blur(.45px)" width="373" height="213" viewBox="56 560 373 213"><defs><filter id="tds" x="-10%" y="-10%" width="120%" height="120%"><feGaussianBlur in="SourceAlpha" stdDeviation=".700" result="b"/><feColorMatrix in="b" type="matrix" values="0 0 0 0 .05 0 0 0 0 .2 0 0 0 0 .3 0 0 0 .550 0" result="c"/><feMerge><feMergeNode in="c"/><feMergeNode in="SourceGraphic"/></feMerge></filter></defs><g transform="translate(-53.900 504.700) scale(.15660)"><path d="M1012.5 626.0C1012.9 620.3 1014.5 615.0 1017.4 610.0C1020.2 605.0 1025.0 600.3 1029.6 595.7C1034.2 591.1 1038.5 587.1 1045.2 582.6C1051.9 578.1 1060.9 572.6 1069.6 568.7C1078.3 564.9 1088.8 561.4 1097.5 559.5C1106.2 557.6 1114.0 557.1 1121.8 557.5C1129.6 557.9 1137.2 559.6 1144.4 561.8C1151.7 564.0 1158.0 566.5 1165.3 570.5C1172.6 574.5 1180.8 580.4 1188.0 586.0C1195.2 591.6 1202.6 598.7 1208.8 604.4C1215.0 610.1 1219.0 613.8 1225.0 620.0C1231.0 626.2 1237.3 634.3 1244.7 641.4C1252.1 648.5 1261.1 656.1 1269.3 662.7C1277.5 669.3 1287.2 675.9 1294.0 680.8C1300.8 685.7 1304.9 688.5 1310.4 692.3C1315.9 696.1 1321.4 699.7 1326.9 703.8C1332.4 707.9 1338.4 712.6 1343.3 717.0C1348.2 721.4 1352.3 724.9 1356.4 730.1C1360.5 735.3 1364.4 741.9 1368.0 748.2C1371.6 754.5 1375.1 761.4 1377.8 768.0C1380.5 774.6 1382.7 782.8 1384.0 788.0C1385.3 793.2 1385.5 794.5 1385.6 799.0C1385.7 803.5 1385.5 809.5 1384.4 814.8C1383.3 820.1 1381.6 826.0 1379.2 831.0C1376.8 836.0 1373.9 841.1 1370.0 845.0C1366.1 848.9 1361.2 851.6 1356.0 854.3C1350.8 857.0 1344.4 858.9 1338.6 861.2C1332.8 863.5 1328.0 865.5 1321.2 868.2C1314.4 870.9 1305.7 874.6 1298.0 877.5C1290.3 880.4 1282.5 883.2 1274.8 885.6C1267.1 888.0 1259.4 890.5 1251.6 892.0C1243.8 893.5 1237.3 894.4 1228.0 894.3C1218.7 894.2 1206.2 893.3 1196.0 891.2C1185.8 889.1 1176.7 885.8 1167.0 881.8C1157.3 877.8 1146.5 872.2 1138.0 867.3C1129.5 862.4 1124.1 859.4 1115.8 852.5C1107.5 845.6 1095.3 835.6 1088.0 826.0C1080.7 816.4 1075.6 805.2 1072.0 795.0C1068.4 784.8 1068.4 775.0 1066.4 765.0C1064.4 755.0 1063.2 744.7 1060.0 735.0C1056.8 725.3 1051.2 715.4 1047.0 707.0C1042.8 698.6 1038.9 691.9 1034.8 684.4C1030.7 676.9 1025.9 668.5 1022.6 661.8C1019.3 655.1 1016.5 650.4 1014.8 644.4C1013.1 638.4 1012.1 631.7 1012.5 626.0Z" fill="#93dfee" stroke="#3f88a6" stroke-width="4"/><path d="M1012.5 626.0C1012.9 620.3 1014.5 615.0 1017.4 610.0C1020.2 605.0 1025.0 600.3 1029.6 595.7C1034.2 591.1 1038.5 587.1 1045.2 582.6C1051.9 578.1 1060.9 572.6 1069.6 568.7C1078.3 564.9 1088.8 561.4 1097.5 559.5C1106.2 557.6 1114.0 557.1 1121.8 557.5C1129.6 557.9 1137.2 559.6 1144.4 561.8C1151.7 564.0 1158.0 566.5 1165.3 570.5C1172.6 574.5 1180.8 580.4 1188.0 586.0C1195.2 591.6 1201.8 597.9 1208.8 604.4C1215.8 610.9 1223.3 618.9 1229.7 625.3C1236.1 631.7 1240.4 636.6 1247.0 642.7C1253.6 648.8 1259.3 654.0 1269.5 662.0C1279.7 670.0 1296.8 682.9 1308.0 691.0C1319.2 699.1 1329.7 704.6 1336.7 710.5C1343.7 716.4 1346.3 719.7 1349.8 726.2C1353.3 732.7 1355.9 739.7 1357.6 749.7C1359.3 759.7 1361.3 774.5 1360.2 786.3C1359.1 798.0 1356.7 811.5 1351.0 820.2C1345.3 828.9 1337.1 834.0 1326.0 838.5C1314.9 843.0 1296.5 845.2 1284.5 847.0C1272.5 848.8 1263.9 848.9 1254.0 849.5C1244.1 850.1 1234.7 850.5 1225.0 850.6C1215.3 850.7 1205.7 850.6 1196.0 850.0C1186.3 849.4 1175.5 847.6 1167.0 847.0C1158.5 846.4 1151.8 846.0 1145.3 846.3C1138.8 846.5 1133.3 847.4 1127.9 848.5C1122.5 849.6 1119.7 856.8 1113.0 853.0C1106.3 849.2 1094.8 835.7 1088.0 826.0C1081.2 816.3 1075.6 805.2 1072.0 795.0C1068.4 784.8 1068.4 775.0 1066.4 765.0C1064.4 755.0 1063.2 744.7 1060.0 735.0C1056.8 725.3 1051.2 715.4 1047.0 707.0C1042.8 698.6 1038.9 691.9 1034.8 684.4C1030.7 676.9 1025.9 668.5 1022.6 661.8C1019.3 655.1 1016.5 650.4 1014.8 644.4C1013.1 638.4 1012.1 631.7 1012.5 626.0Z" fill="#5aa7d2"/><path d="M1012.5 626.0C1012.9 620.3 1014.5 615.0 1017.4 610.0C1020.2 605.0 1025.0 600.3 1029.6 595.7C1034.2 591.1 1038.5 587.1 1045.2 582.6C1051.9 578.1 1060.9 572.6 1069.6 568.7C1078.3 564.9 1088.8 561.4 1097.5 559.5C1106.2 557.6 1114.0 557.1 1121.8 557.5C1129.6 557.9 1137.2 559.6 1144.4 561.8C1151.7 564.0 1158.0 566.5 1165.3 570.5C1172.6 574.5 1180.8 580.4 1188.0 586.0C1195.2 591.6 1201.8 597.9 1208.8 604.4C1215.8 610.9 1223.3 618.9 1229.7 625.3C1236.1 631.7 1240.4 636.6 1247.0 642.7C1253.6 648.8 1260.7 654.9 1269.5 662.0C1278.3 669.1 1293.3 679.5 1300.0 685.5C1306.7 691.5 1307.8 692.6 1309.5 698.0C1311.2 703.4 1310.0 708.5 1310.0 718.0C1310.0 727.5 1310.5 744.5 1309.3 755.0C1308.1 765.5 1305.9 773.2 1302.7 781.0C1299.5 788.8 1294.8 796.5 1290.3 802.0C1285.8 807.5 1281.8 810.5 1275.8 813.7C1269.8 816.9 1262.5 819.3 1254.0 821.0C1245.5 822.7 1235.7 823.6 1225.0 823.8C1214.3 824.0 1202.1 823.9 1190.0 822.4C1177.9 820.9 1162.8 817.7 1152.5 815.0C1142.2 812.3 1135.2 809.8 1127.9 806.4C1120.7 803.0 1113.8 799.4 1109.0 794.8C1104.2 790.2 1102.1 786.0 1098.9 778.9C1095.7 771.8 1093.4 760.6 1089.7 752.0C1086.0 743.4 1081.8 734.7 1076.6 727.0C1071.4 719.3 1064.1 711.7 1058.3 706.0C1052.5 700.3 1045.9 696.6 1042.0 693.0C1038.1 689.4 1038.0 689.6 1034.8 684.4C1031.6 679.2 1025.9 668.5 1022.6 661.8C1019.3 655.1 1016.5 650.4 1014.8 644.4C1013.1 638.4 1012.1 631.7 1012.5 626.0Z" fill="#3e78a6"/><path d="M1012.5 626.0C1012.9 620.3 1014.5 615.0 1017.4 610.0C1020.2 605.0 1025.0 600.3 1029.6 595.7C1034.2 591.1 1038.5 587.1 1045.2 582.6C1051.9 578.1 1060.9 572.6 1069.6 568.7C1078.3 564.9 1088.8 561.4 1097.5 559.5C1106.2 557.6 1114.0 557.1 1121.8 557.5C1129.6 557.9 1137.2 559.6 1144.4 561.8C1151.7 564.0 1158.0 566.5 1165.3 570.5C1172.6 574.5 1180.8 580.4 1188.0 586.0C1195.2 591.6 1201.8 597.9 1208.8 604.4C1215.8 610.9 1223.3 618.9 1229.7 625.3C1236.1 631.7 1240.4 636.6 1247.0 642.7C1253.6 648.8 1261.0 655.1 1269.5 662.0C1278.0 668.9 1292.1 678.0 1298.0 684.0C1303.9 690.0 1304.0 692.0 1305.0 698.0C1306.0 704.0 1304.5 711.0 1304.0 720.0C1303.5 729.0 1303.5 742.5 1302.0 752.0C1300.5 761.5 1298.2 769.7 1295.0 777.0C1291.8 784.3 1287.5 791.2 1283.0 796.0C1278.5 800.8 1273.8 803.5 1268.0 806.0C1262.2 808.5 1255.7 810.0 1248.0 811.0C1240.3 812.0 1231.7 812.3 1222.0 812.0C1212.3 811.7 1200.7 810.8 1190.0 809.0C1179.3 807.2 1167.3 804.0 1158.0 801.0C1148.7 798.0 1140.7 794.7 1134.0 791.0C1127.3 787.3 1122.2 783.5 1118.0 779.0C1113.8 774.5 1112.0 770.2 1109.0 764.0C1106.0 757.8 1103.7 749.3 1100.0 742.0C1096.3 734.7 1092.3 726.8 1087.0 720.0C1081.7 713.2 1074.5 706.2 1068.0 701.0C1061.5 695.8 1053.3 692.2 1048.0 689.0C1042.7 685.8 1040.2 686.5 1036.0 682.0C1031.8 677.5 1026.1 668.1 1022.6 661.8C1019.1 655.5 1016.5 650.4 1014.8 644.4C1013.1 638.4 1012.1 631.7 1012.5 626.0Z" fill="#34608c"/><path d="M1045.2 582.6C1047.2 579.4 1060.9 572.6 1069.6 568.7C1078.3 564.9 1088.8 561.4 1097.5 559.5C1106.2 557.6 1114.0 557.1 1121.8 557.5C1129.6 557.9 1137.2 559.6 1144.4 561.8C1151.7 564.0 1165.3 566.9 1165.3 570.5C1165.3 574.1 1151.1 579.9 1144.4 583.5C1137.7 587.1 1132.0 590.2 1125.3 592.2C1118.6 594.2 1112.2 595.2 1104.4 595.3C1096.6 595.4 1086.1 594.2 1078.3 593.0C1070.5 591.8 1062.9 589.6 1057.4 587.9C1051.9 586.2 1043.2 585.8 1045.2 582.6Z" fill="#5aa7d2"/><path d="M1279.5 583.3C1279.0 577.2 1280.3 571.5 1283.2 566.8C1286.1 562.0 1291.0 557.6 1297.0 554.8C1303.0 552.0 1310.7 550.2 1319.0 550.2C1327.3 550.2 1337.7 552.8 1346.6 554.8C1355.5 556.8 1365.1 559.4 1372.4 562.2C1379.8 565.0 1385.8 566.6 1390.7 571.4C1395.6 576.1 1399.2 583.2 1401.8 590.7C1404.4 598.2 1406.4 608.1 1406.4 616.4C1406.4 624.7 1404.1 633.2 1401.8 640.3C1399.5 647.3 1396.9 654.0 1392.6 658.7C1388.3 663.5 1381.8 667.1 1376.0 668.8C1370.2 670.5 1363.7 670.0 1357.6 668.8C1351.5 667.6 1345.7 664.9 1339.3 661.4C1332.9 657.9 1325.4 653.6 1319.0 647.6C1312.6 641.6 1306.2 633.0 1300.7 625.6C1295.2 618.2 1289.5 610.5 1286.0 603.5C1282.5 596.5 1280.0 589.4 1279.5 583.3Z" fill="#34608c" stroke="#2a5578" stroke-width="3"/><path d="M1390.700 571.400 C1374 590 1356 625 1349.400 667 L1376 668.800 L1392.600 658.700 L1406.400 616.400 L1401.800 590.700Z" fill="#93dfee"/><ellipse cx="1013" cy="751.500" rx="19.500" ry="31.500" fill="#7ccbe4" stroke="#3f88a6" stroke-width="3" transform="rotate(-17 1013 751.500)"/><circle cx="1034.800" cy="806.600" r="14" fill="#6bbcdc" stroke="#3f88a6" stroke-width="3"/><circle cx="1370.500" cy="695" r="10" fill="#bfe6ee"/><rect x="1114" y="655.500" width="130" height="127.500" rx="22" fill="#fff"/><rect x="1121" y="662.500" width="116" height="113.500" rx="17" fill="#ee5a9d"/><rect x="1160" y="678" width="38" height="52" rx="4" fill="none" stroke="#fff" stroke-width="8"/><path d="M1140 748 H1180 L1212 742 L1190 761 H1140Z" fill="#fff"/></g><g filter="url(#tds)"><path d="M212.5 623.6C212.7 619.8 212.9 612.8 215.1 608.4C217.2 604.0 221.0 599.7 225.2 597.0C229.4 594.2 235.4 591.9 240.5 591.9C245.5 591.9 251.5 594.2 255.7 597.0C259.9 599.7 263.6 604.4 265.8 608.4C268.0 612.4 269.3 617.3 268.9 621.1C268.5 624.9 265.9 628.3 263.3 631.3C260.7 634.2 257.4 637.0 253.1 638.9C248.9 640.8 243.0 642.9 237.9 642.7C232.8 642.5 226.7 639.5 222.7 637.6C218.7 635.7 215.5 633.6 213.8 631.3C212.1 628.9 212.3 627.5 212.5 623.6Z" fill="#93dfee" stroke="#4a9db5" stroke-width=".600"/><path d="M213.6 620.5C213.8 617.1 214.0 610.8 216.1 606.8C218.1 602.8 221.8 599.0 225.8 596.5C229.9 594.1 235.6 592.0 240.5 592.0C245.3 592.0 251.0 594.1 255.1 596.5C259.1 599.0 262.7 603.2 264.8 606.8C266.9 610.4 268.2 614.8 267.8 618.3C267.3 621.7 264.9 624.7 262.4 627.4C259.9 630.1 256.7 632.5 252.6 634.3C248.6 636.0 242.9 637.9 238.0 637.7C233.1 637.5 227.2 634.8 223.4 633.1C219.5 631.4 216.5 629.5 214.9 627.4C213.2 625.3 213.4 624.0 213.6 620.5Z" fill="#5aa7d2"/><path d="M214.8 617.4C214.9 614.4 215.1 608.8 217.1 605.3C219.0 601.7 222.5 598.3 226.4 596.1C230.3 593.9 235.8 592.1 240.5 592.1C245.1 592.1 250.6 593.9 254.5 596.1C258.4 598.3 261.8 602.0 263.8 605.3C265.8 608.5 267.0 612.4 266.6 615.4C266.2 618.5 263.9 621.2 261.5 623.5C259.1 625.9 256.0 628.1 252.1 629.6C248.2 631.2 242.8 632.9 238.1 632.7C233.4 632.5 227.8 630.1 224.1 628.6C220.4 627.1 217.5 625.4 215.9 623.5C214.4 621.7 214.6 620.5 214.8 617.4Z" fill="#3e78a6"/><path d="M215.6 615.0C215.8 612.2 216.0 607.2 217.9 604.0C219.7 600.8 223.1 597.8 226.9 595.8C230.7 593.8 235.9 592.1 240.5 592.1C245.0 592.1 250.2 593.8 254.0 595.8C257.8 597.8 261.1 601.1 263.1 604.0C265.0 606.9 266.1 610.4 265.8 613.1C265.4 615.9 263.1 618.3 260.8 620.5C258.5 622.6 255.5 624.6 251.8 625.9C248.0 627.3 242.7 628.8 238.2 628.7C233.7 628.5 228.2 626.4 224.6 625.0C221.1 623.7 218.2 622.1 216.7 620.5C215.2 618.8 215.4 617.7 215.6 615.0Z" fill="#34608c"/></g><ellipse cx="262.8" cy="597.7" rx="2.8" ry="4.3" fill="#4f8fba" stroke="#3f88a6" stroke-width=".500" transform="rotate(-20 262.8 597.7)"/><ellipse cx="270.4" cy="597.0" rx="2.0" ry="3.0" fill="#7fd0e6" stroke="#3f88a6" stroke-width=".500" transform="rotate(10 270.4 597.0)"/><ellipse cx="209.2" cy="610.4" rx="2.3" ry="3.6" fill="#7fd0e6" stroke="#3f88a6" stroke-width=".500" transform="rotate(-10 209.2 610.4)"/><ellipse cx="269.7" cy="610.9" rx="1.3" ry="1.3" fill="#3e78a6" stroke="#3f88a6" stroke-width=".500" transform="rotate(0 269.7 610.9)"/><ellipse cx="205.4" cy="616.5" rx="0.8" ry="0.8" fill="#34608c" stroke="#3f88a6" stroke-width=".500" transform="rotate(0 205.4 616.5)"/><rect x="228.2" y="604.6" width="20.400" height="20.400" rx="3.500" fill="#fff"/><rect x="229.4" y="605.8" width="18" height="18" rx="2.800" fill="#ee5a9d"/><circle cx="238.4" cy="613.3" r="3.600" fill="none" stroke="#fff" stroke-width="1.800"/><path d="M235.4 620.8 L236.9 616.8 M241.4 620.8 L239.9 616.8" stroke="#fff" stroke-width="1.800"/><g filter="url(#tds)"><path d="M325.5 618.6C325.5 613.9 326.2 607.3 328.1 603.3C330.0 599.3 333.4 596.3 336.9 594.4C340.5 592.5 345.0 591.5 349.6 591.9C354.3 592.3 360.9 593.8 364.9 597.0C368.9 600.2 372.1 606.1 373.8 610.9C375.5 615.8 376.1 621.5 375.0 626.2C374.0 630.8 371.2 635.9 367.4 638.9C363.6 641.8 357.3 643.7 352.2 644.0C347.1 644.2 341.0 642.3 336.9 640.1C332.9 638.0 330.0 634.9 328.1 631.3C326.2 627.7 325.5 623.2 325.5 618.6Z" fill="#93dfee" stroke="#4a9db5" stroke-width=".600"/><path d="M326.6 616.0C326.6 611.8 327.2 605.9 329.0 602.3C330.9 598.6 334.1 596.0 337.6 594.3C341.0 592.5 345.3 591.6 349.7 592.0C354.2 592.4 360.5 593.7 364.4 596.5C368.2 599.4 371.3 604.7 372.9 609.1C374.5 613.5 375.1 618.6 374.1 622.8C373.1 627.0 370.5 631.6 366.8 634.3C363.2 636.9 357.1 638.6 352.2 638.8C347.3 639.0 341.4 637.3 337.6 635.4C333.7 633.5 330.9 630.6 329.0 627.4C327.2 624.2 326.6 620.2 326.6 616.0Z" fill="#5aa7d2"/><path d="M327.7 613.4C327.7 609.7 328.2 604.4 330.0 601.2C331.7 598.0 334.9 595.6 338.2 594.1C341.5 592.6 345.6 591.7 349.8 592.1C354.1 592.4 360.2 593.6 363.9 596.1C367.6 598.7 370.5 603.4 372.0 607.3C373.6 611.2 374.2 615.8 373.2 619.5C372.2 623.2 369.7 627.3 366.2 629.6C362.7 632.0 356.9 633.5 352.2 633.7C347.5 633.9 341.9 632.3 338.2 630.7C334.5 629.0 331.7 626.4 330.0 623.5C328.2 620.7 327.7 617.1 327.7 613.4Z" fill="#3e78a6"/><path d="M328.5 611.3C328.5 608.0 329.0 603.2 330.7 600.3C332.4 597.4 335.4 595.3 338.6 593.9C341.8 592.6 345.8 591.8 349.9 592.1C354.1 592.4 359.9 593.5 363.5 595.8C367.1 598.1 369.9 602.3 371.4 605.8C372.9 609.3 373.5 613.4 372.5 616.8C371.6 620.1 369.1 623.8 365.7 625.9C362.4 628.1 356.7 629.4 352.2 629.6C347.7 629.7 342.2 628.4 338.6 626.9C335.0 625.3 332.4 623.0 330.7 620.5C329.0 617.9 328.5 614.7 328.5 611.3Z" fill="#34608c"/></g><ellipse cx="318.2" cy="617.3" rx="4.3" ry="6.3" fill="#86d6ea" stroke="#3f88a6" stroke-width=".500" transform="rotate(5 318.2 617.3)"/><ellipse cx="317.1" cy="630.8" rx="3.0" ry="2.8" fill="#86d6ea" stroke="#3f88a6" stroke-width=".500" transform="rotate(0 317.1 630.8)"/><ellipse cx="321.2" cy="606.4" rx="0.8" ry="0.8" fill="#34608c" stroke="#3f88a6" stroke-width=".500" transform="rotate(0 321.2 606.4)"/><rect x="339.4" y="602.8" width="20.400" height="20.400" rx="3.500" fill="#fff"/><rect x="340.6" y="604.0" width="18" height="18" rx="2.800" fill="#ee5a9d"/><rect x="344.6" y="608.0" width="10" height="10" rx="1" fill="#fff"/><path d="M347.1 606.5 V609.5 M352.1 606.5 V609.5" stroke="#fff" stroke-width="1.500"/><path d="M347.1 614.0 L349.1 616.0 L352.6 612.0" stroke="#ee5a9d" stroke-width="1.300" fill="none"/><g filter="url(#tds)"><path d="M105.9 697.3C106.3 693.5 107.1 688.4 109.7 684.6C112.2 680.8 116.7 676.8 121.1 674.4C125.5 672.1 131.7 670.6 136.3 670.6C141.0 670.6 145.6 671.7 149.0 674.4C152.4 677.2 154.3 682.9 156.7 687.1C159.0 691.4 162.4 695.6 163.0 699.8C163.6 704.1 163.2 709.1 160.5 712.5C157.7 715.9 151.8 718.4 146.5 720.1C141.2 721.8 134.2 723.3 128.7 722.7C123.2 722.0 117.1 718.9 113.5 716.3C109.9 713.8 108.4 710.6 107.1 707.4C105.9 704.3 105.4 701.1 105.9 697.3Z" fill="#93dfee" stroke="#4a9db5" stroke-width=".600"/><path d="M107.3 694.7C107.7 691.3 108.5 686.7 110.9 683.3C113.4 679.8 117.6 676.2 121.9 674.1C126.2 672.0 132.1 670.7 136.5 670.7C141.0 670.7 145.5 671.6 148.7 674.1C152.0 676.6 153.8 681.7 156.0 685.6C158.3 689.4 161.5 693.2 162.1 697.0C162.7 700.8 162.3 705.4 159.7 708.4C157.1 711.5 151.4 713.7 146.3 715.3C141.2 716.8 134.5 718.1 129.2 717.5C123.9 717.0 118.1 714.1 114.6 711.8C111.1 709.5 109.7 706.7 108.5 703.8C107.3 701.0 106.9 698.1 107.3 694.7Z" fill="#5aa7d2"/><path d="M108.7 692.1C109.1 689.1 109.9 685.0 112.2 681.9C114.6 678.9 118.6 675.7 122.7 673.8C126.8 672.0 132.5 670.8 136.7 670.8C141.0 670.8 145.3 671.6 148.4 673.8C151.5 676.0 153.3 680.6 155.4 684.0C157.6 687.4 160.7 690.7 161.3 694.1C161.9 697.5 161.5 701.6 158.9 704.3C156.4 707.0 151.0 709.0 146.1 710.4C141.2 711.7 134.8 712.9 129.7 712.4C124.7 711.9 119.0 709.4 115.7 707.3C112.4 705.3 111.0 702.8 109.9 700.2C108.7 697.7 108.3 695.1 108.7 692.1Z" fill="#3e78a6"/><path d="M109.8 690.0C110.2 687.3 110.9 683.6 113.2 680.9C115.4 678.1 119.4 675.3 123.3 673.6C127.3 671.9 132.8 670.8 136.9 670.8C141.0 670.8 145.2 671.6 148.2 673.6C151.2 675.6 152.9 679.7 155.0 682.7C157.0 685.8 160.1 688.8 160.6 691.9C161.2 694.9 160.8 698.6 158.4 701.0C155.9 703.4 150.6 705.3 145.9 706.5C141.2 707.7 135.0 708.8 130.1 708.3C125.2 707.9 119.8 705.6 116.6 703.7C113.4 701.9 112.0 699.6 110.9 697.3C109.8 695.1 109.4 692.8 109.8 690.0Z" fill="#34608c"/></g><ellipse cx="159.2" cy="682.0" rx="5.1" ry="7.1" fill="#34608c" stroke="#2a5578" stroke-width=".500" transform="rotate(-25 159.2 682.0)"/><ellipse cx="166.3" cy="692.2" rx="1.3" ry="1.5" fill="#6bbcdc" stroke="#3f88a6" stroke-width=".500" transform="rotate(0 166.3 692.2)"/><ellipse cx="167.3" cy="697.3" rx="1.0" ry="1.0" fill="#6bbcdc" stroke="#3f88a6" stroke-width=".500" transform="rotate(0 167.3 697.3)"/><ellipse cx="118.1" cy="673.2" rx="1.3" ry="1.3" fill="#3e78a6" stroke="#3f88a6" stroke-width=".500" transform="rotate(0 118.1 673.2)"/><rect x="123.6" y="684.5" width="20.400" height="20.400" rx="3.500" fill="#fff"/><rect x="124.8" y="685.7" width="18" height="18" rx="2.800" fill="#ee5a9d"/><path d="M127.8 698.7 V690.7 L131.8 694.7 L134.8 689.7 L137.8 693.7 L139.8 690.7 V698.7Z" fill="#fff"/><path d="M127.8 700.9 H139.8" stroke="#fff" stroke-width="1.400"/><g filter="url(#tds)"><path d="M217.6 692.2C218.2 688.4 219.7 682.5 222.7 679.5C225.6 676.5 230.7 674.9 235.4 674.4C240.0 674.0 246.0 674.6 250.6 677.0C255.3 679.3 259.5 684.2 263.3 688.4C267.1 692.6 271.3 697.9 273.5 702.4C275.6 706.8 277.3 711.0 276.0 715.1C274.7 719.1 270.5 723.9 265.8 726.5C261.2 729.0 253.6 730.5 248.1 730.3C242.6 730.1 236.6 728.2 232.8 725.2C229.0 722.3 227.5 716.3 225.2 712.5C222.9 708.7 220.1 705.7 218.9 702.4C217.6 699.0 217.0 696.0 217.6 692.2Z" fill="#93dfee" stroke="#4a9db5" stroke-width=".600"/><path d="M218.7 690.5C219.3 687.0 220.7 681.7 223.6 679.1C226.4 676.4 231.3 674.9 235.8 674.5C240.2 674.1 245.9 674.7 250.4 676.8C254.9 678.9 258.9 683.2 262.6 687.0C266.3 690.9 270.3 695.6 272.3 699.6C274.4 703.6 276.0 707.4 274.8 711.0C273.6 714.7 269.5 719.0 265.0 721.3C260.6 723.6 253.3 724.9 248.0 724.8C242.7 724.6 237.0 722.9 233.3 720.2C229.7 717.5 228.3 712.2 226.0 708.8C223.8 705.3 221.2 702.7 219.9 699.6C218.7 696.6 218.1 693.9 218.7 690.5Z" fill="#5aa7d2"/><path d="M219.8 688.8C220.4 685.7 221.8 681.0 224.5 678.6C227.2 676.2 231.9 674.9 236.2 674.5C240.5 674.2 245.9 674.7 250.2 676.6C254.5 678.4 258.4 682.3 261.9 685.7C265.4 689.1 269.3 693.3 271.2 696.9C273.2 700.4 274.7 703.8 273.6 707.0C272.4 710.3 268.5 714.1 264.2 716.2C259.9 718.2 252.9 719.4 247.9 719.2C242.8 719.1 237.4 717.5 233.8 715.2C230.3 712.8 229.0 708.0 226.8 705.0C224.7 702.0 222.2 699.6 221.0 696.9C219.8 694.2 219.2 691.8 219.8 688.8Z" fill="#3e78a6"/><path d="M220.7 687.4C221.2 684.6 222.6 680.4 225.2 678.2C227.8 676.1 232.3 674.9 236.5 674.6C240.6 674.3 245.9 674.7 250.1 676.4C254.2 678.1 258.0 681.6 261.4 684.6C264.7 687.7 268.5 691.5 270.4 694.7C272.3 697.9 273.8 700.9 272.7 703.8C271.5 706.7 267.8 710.2 263.6 712.1C259.5 713.9 252.7 714.9 247.8 714.8C242.9 714.6 237.6 713.3 234.2 711.1C230.8 709.0 229.5 704.7 227.5 702.0C225.4 699.3 222.9 697.1 221.8 694.7C220.7 692.2 220.1 690.1 220.7 687.4Z" fill="#34608c"/></g><ellipse cx="271.4" cy="682.0" rx="8.4" ry="8.4" fill="#34608c" stroke="#2a5578" stroke-width=".500" transform="rotate(0 271.4 682.0)"/><ellipse cx="212.5" cy="707.4" rx="5.1" ry="6.3" fill="#86d6ea" stroke="#3f88a6" stroke-width=".500" transform="rotate(-15 212.5 707.4)"/><ellipse cx="281.1" cy="702.4" rx="3.8" ry="4.3" fill="#86d6ea" stroke="#3f88a6" stroke-width=".500" transform="rotate(0 281.1 702.4)"/><ellipse cx="280.6" cy="693.7" rx="1.5" ry="1.5" fill="#6bbcdc" stroke="#3f88a6" stroke-width=".500" transform="rotate(0 280.6 693.7)"/><rect x="233.3" y="689.6" width="20.400" height="20.400" rx="3.500" fill="#fff"/><rect x="234.5" y="690.8" width="18" height="18" rx="2.800" fill="#ee5a9d"/><rect x="239.0" y="694.3" width="9" height="11.500" rx="1.200" fill="#fff"/><path d="M241.3 700.8 L243.0 702.6 L246.0 698.8" stroke="#ee5a9d" stroke-width="1.300" fill="none"/><g filter="url(#tds)"><path d="M307.7 694.7C308.4 690.9 310.9 685.2 314.1 682.0C317.3 678.9 322.1 676.1 326.8 675.7C331.4 675.3 337.4 677.4 342.0 679.5C346.7 681.6 350.1 686.5 354.7 688.4C359.4 690.3 365.9 688.6 370.0 690.9C374.0 693.3 377.8 698.3 378.8 702.4C379.9 706.4 378.6 711.0 376.3 715.1C374.0 719.1 369.3 723.3 364.9 726.5C360.4 729.7 354.7 733.9 349.6 734.1C344.6 734.3 339.5 730.9 334.4 727.8C329.3 724.6 323.2 718.9 319.2 715.1C315.2 711.2 312.2 708.3 310.3 704.9C308.4 701.5 307.1 698.6 307.7 694.7Z" fill="#93dfee" stroke="#4a9db5" stroke-width=".600"/><path d="M309.5 692.9C310.1 689.5 312.6 684.3 315.6 681.5C318.7 678.6 323.3 676.2 327.8 675.8C332.3 675.4 338.0 677.3 342.4 679.2C346.9 681.1 350.2 685.5 354.6 687.2C359.1 688.9 365.4 687.4 369.2 689.5C373.1 691.6 376.8 696.2 377.8 699.8C378.8 703.4 377.6 707.6 375.3 711.2C373.1 714.8 368.6 718.6 364.4 721.5C360.1 724.3 354.6 728.1 349.7 728.3C344.9 728.5 340.0 725.5 335.1 722.6C330.2 719.8 324.4 714.6 320.5 711.2C316.6 707.8 313.8 705.1 312.0 702.1C310.1 699.0 308.9 696.3 309.5 692.9Z" fill="#5aa7d2"/><path d="M311.3 691.1C311.9 688.0 314.2 683.5 317.1 680.9C320.1 678.4 324.5 676.2 328.8 675.9C333.1 675.5 338.6 677.2 342.8 678.9C347.1 680.6 350.2 684.5 354.5 686.0C358.8 687.5 364.8 686.2 368.5 688.0C372.2 689.9 375.7 694.0 376.7 697.2C377.7 700.4 376.5 704.1 374.4 707.3C372.2 710.6 368.0 713.9 363.9 716.5C359.8 719.0 354.5 722.4 349.8 722.6C345.2 722.7 340.5 720.0 335.8 717.5C331.2 715.0 325.5 710.4 321.8 707.3C318.1 704.3 315.4 701.9 313.6 699.2C311.9 696.5 310.7 694.1 311.3 691.1Z" fill="#3e78a6"/><path d="M312.6 689.6C313.2 686.9 315.5 682.8 318.3 680.5C321.1 678.2 325.4 676.2 329.6 675.9C333.7 675.6 339.0 677.1 343.1 678.7C347.3 680.2 350.3 683.7 354.4 685.1C358.6 686.4 364.4 685.2 368.0 686.9C371.6 688.6 375.0 692.2 375.9 695.1C376.9 698.0 375.7 701.4 373.7 704.3C371.6 707.1 367.4 710.2 363.5 712.5C359.5 714.8 354.4 717.8 349.9 718.0C345.4 718.1 340.9 715.7 336.4 713.4C331.8 711.1 326.4 707.0 322.8 704.3C319.2 701.5 316.6 699.4 314.9 696.9C313.2 694.5 312.1 692.4 312.6 689.6Z" fill="#34608c"/></g><ellipse cx="347.1" cy="675.2" rx="9.6" ry="7.4" fill="#34608c" stroke="#2a5578" stroke-width=".500" transform="rotate(15 347.1 675.2)"/><ellipse cx="368.7" cy="726.5" rx="3.8" ry="3.6" fill="#86d6ea" stroke="#3f88a6" stroke-width=".500" transform="rotate(0 368.7 726.5)"/><ellipse cx="380.1" cy="693.7" rx="1.5" ry="1.5" fill="#3e78a6" stroke="#3f88a6" stroke-width=".500" transform="rotate(0 380.1 693.7)"/><ellipse cx="364.4" cy="680.8" rx="1.0" ry="1.0" fill="#4f8fba" stroke="#3f88a6" stroke-width=".500" transform="rotate(0 364.4 680.8)"/><rect x="334.9" y="693.4" width="20.400" height="20.400" rx="3.500" fill="#fff"/><rect x="336.1" y="694.6" width="18" height="18" rx="2.800" fill="#ee5a9d"/><rect x="341.6" y="700.6" width="7" height="5.500" rx=".800" fill="#fff"/><path d="M343.1 700.6 V698.6 A2 2 0 0 1 347.1 698.6 V700.6" stroke="#fff" stroke-width="1.200" fill="none"/><path d="M338.6 708.1 H346.1 L351.6 706.6 L347.1 710.6 H338.6Z" fill="#fff"/><text x="242.500" y="766" font-family="Liberation Sans,sans-serif" font-size="4.200" fill="#f08db8" text-anchor="middle" textLength="28" lengthAdjust="spacingAndGlyphs">ampler.io</text></svg><svg class="a" style="left:61px;top:810px;filter:blur(.45px)" width="364" height="204" viewBox="61 810 364 204"><defs><linearGradient id="capg" x1="0" y1="0" x2="0" y2="1"><stop offset="0" stop-color="#f79bbd"/><stop offset=".55" stop-color="#ea5a88"/><stop offset="1" stop-color="#c93a63"/></linearGradient></defs><path d="M159.8 816 V1003 M182.6 816 V1003 M205.4 816 V1003 M228.2 816 V1003 M252.0 816 V1003 M274.8 816 V1003 M291.7 816 V1003 M297.6 816 V1003 M154 823.9 H331 M154 846.7 H331 M154 869.5 H331 M154 894.3 H331 M154 917.1 H331 M154 940.8 H331 M154 963.6 H331 M154 986.4 H331 " stroke="#f5eef2" stroke-width=".600" fill="none"/><path d="M154 995.500 H293" stroke="#f6c9d4" stroke-width=".800"/><path d="M293 999.500 H330" stroke="#f6c9d4" stroke-width=".600"/><g id="tree"><path d="M224.3 936.9Q250.1 942.0 275.1 943.1M224.3 936.9Q251.3 945.4 279.9 950.0M224.3 936.9Q250.9 947.9 275.2 954.9M224.3 936.9Q245.6 950.0 269.9 959.1M224.3 936.9Q249.7 954.0 271.6 967.0M224.3 936.9Q239.8 953.3 259.5 965.6M224.3 936.9Q241.3 954.3 253.7 967.6M224.3 936.9Q235.7 957.7 252.2 974.6M224.3 936.9Q237.7 958.1 245.7 975.4M224.3 936.9Q229.0 958.2 239.4 975.5M224.3 936.9Q231.8 957.8 233.5 974.8M224.3 936.9Q223.4 960.6 228.6 980.3M224.3 936.9Q226.4 959.6 222.6 978.4M224.3 936.9Q217.8 958.4 217.2 975.8M224.3 936.9Q220.2 960.1 210.3 979.4M224.3 936.9Q212.1 958.3 205.4 975.7M224.3 936.9Q215.4 956.3 201.4 971.6M224.3 936.9Q206.4 956.8 193.4 972.8M224.3 936.9Q209.4 954.3 190.3 967.7M224.3 936.9Q201.4 953.8 182.3 966.7M224.3 936.9Q204.1 950.8 180.7 960.7M224.3 936.9Q196.9 949.6 172.0 958.2M224.3 936.9Q199.1 946.3 172.0 951.8M224.3 936.9Q198.1 943.2 173.0 945.6" fill="none" stroke="#d3ebf5" stroke-width="1.500" stroke-linecap="round"/><path d="M224.3 936.9Q250.1 942.0 275.1 943.1M224.3 936.9Q251.3 945.4 279.9 950.0M224.3 936.9Q250.9 947.9 275.2 954.9M224.3 936.9Q245.6 950.0 269.9 959.1M224.3 936.9Q249.7 954.0 271.6 967.0M224.3 936.9Q239.8 953.3 259.5 965.6M224.3 936.9Q241.3 954.3 253.7 967.6M224.3 936.9Q235.7 957.7 252.2 974.6M224.3 936.9Q237.7 958.1 245.7 975.4M224.3 936.9Q229.0 958.2 239.4 975.5M224.3 936.9Q231.8 957.8 233.5 974.8M224.3 936.9Q223.4 960.6 228.6 980.3M224.3 936.9Q226.4 959.6 222.6 978.4M224.3 936.9Q217.8 958.4 217.2 975.8M224.3 936.9Q220.2 960.1 210.3 979.4M224.3 936.9Q212.1 958.3 205.4 975.7M224.3 936.9Q215.4 956.3 201.4 971.6M224.3 936.9Q206.4 956.8 193.4 972.8M224.3 936.9Q209.4 954.3 190.3 967.7M224.3 936.9Q201.4 953.8 182.3 966.7M224.3 936.9Q204.1 950.8 180.7 960.7M224.3 936.9Q196.9 949.6 172.0 958.2M224.3 936.9Q199.1 946.3 172.0 951.8M224.3 936.9Q198.1 943.2 173.0 945.6" fill="none" stroke="#e6f4fa" stroke-width="3.500" stroke-linecap="round" opacity=".600"/><ellipse cx="224.3" cy="944.9" rx="46" ry="13" fill="#e3f2f9" opacity=".900"/><path d="M207.4 822.9C212.7 822.9 221.9 823.1 229.2 825.9C236.5 828.7 245.4 833.8 251.0 839.7C256.6 845.7 259.6 853.9 262.9 861.5C266.2 869.1 268.5 878.4 270.8 885.3C273.2 892.3 276.5 897.6 276.8 903.2C277.1 908.8 276.1 914.7 272.8 919.0C269.5 923.3 263.2 926.6 257.0 929.0C250.7 931.3 240.4 932.3 235.2 933.3C229.9 934.4 228.6 935.3 225.2 935.3C221.9 935.3 220.3 934.4 215.3 933.3C210.4 932.3 201.8 931.0 195.5 929.0C189.2 926.9 182.3 925.0 177.7 921.0C173.0 917.1 169.1 910.4 167.8 905.2C166.4 899.9 167.8 894.6 169.7 889.3C171.7 884.0 176.8 879.1 179.7 873.4C182.5 867.8 185.1 861.5 186.6 855.6C188.1 849.7 186.8 842.7 188.6 837.8C190.4 832.8 194.4 828.3 197.5 825.9C200.6 823.4 202.1 822.9 207.4 822.9Z" fill="#8adbe9" stroke="#5aa9bf" stroke-width=".600"/><path d="M207.6 823.3C212.8 823.3 221.9 823.6 229.0 826.5C236.2 829.3 244.9 834.3 250.4 840.1C255.9 846.0 259.0 854.2 262.1 861.7C265.3 869.3 267.5 878.7 269.5 885.3C271.4 892.0 274.0 896.4 274.0 901.6C274.1 906.7 272.9 912.2 269.7 916.3C266.4 920.3 260.3 923.5 254.6 925.8C248.8 928.0 240.1 928.8 235.2 929.7C230.3 930.7 228.5 931.7 225.2 931.7C222.0 931.8 220.4 930.9 215.7 929.9C211.0 929.0 203.0 927.9 197.1 926.0C191.2 924.0 184.7 921.8 180.4 918.2C176.2 914.6 173.0 909.1 171.7 904.4C170.5 899.6 171.3 894.8 172.9 889.7C174.5 884.6 178.8 879.5 181.2 873.8C183.7 868.2 186.2 861.7 187.6 855.8C188.9 849.8 187.6 843.0 189.4 838.2C191.1 833.3 195.0 828.9 198.1 826.5C201.1 824.0 202.5 823.3 207.6 823.3Z" fill="#4f93bd"/><path d="M207.8 823.9C212.8 823.9 221.8 824.2 228.8 827.0C235.8 829.9 244.4 834.9 249.8 840.7C255.3 846.5 258.3 854.5 261.3 861.9C264.4 869.4 266.4 879.0 268.1 885.3C269.7 891.7 271.6 895.6 271.2 900.2C270.9 904.8 269.3 909.6 266.1 913.1C262.9 916.6 257.2 919.4 252.0 921.4C246.9 923.5 239.6 924.4 235.2 925.4C230.7 926.4 228.4 927.3 225.2 927.4C222.1 927.4 220.8 926.6 216.3 925.8C211.9 924.9 204.2 924.1 198.7 922.2C193.2 920.4 187.0 917.9 183.2 914.7C179.5 911.4 177.1 906.9 176.1 902.8C175.0 898.6 175.7 894.5 176.9 889.7C178.1 884.9 181.2 879.9 183.2 874.2C185.2 868.6 187.6 861.9 188.8 856.0C190.0 850.1 188.7 843.6 190.4 838.7C192.0 833.9 195.8 829.5 198.7 827.0C201.6 824.6 202.8 823.9 207.8 823.9Z" fill="#35608c"/><path d="M221.3 908.9 C221.3 926.9 216.3 932.9 208.3 937.9 H240.3 C232.3 932.9 227.3 926.9 227.3 908.9Z" fill="#e8f3f9"/><path d="M223.9 932.9 L223.7 859.6M223.7 875.4 L216.3 861.5M224.1 881.4 L239.1 869.5M223.7 893.3 L209.4 886.3M224.1 895.2 L237.1 886.3M223.7 905.2 L197.5 898.2M224.1 903.2 L248.0 897.2M223.7 915.1 L209.4 909.1M224.1 914.1 L238.1 907.5M223.7 922.0 L200.5 917.1M224.1 921.0 L248.6 917.1" fill="none" stroke="#dfeaf4" stroke-width="1.800" stroke-linecap="round"/><path d="M223.9 933.9 L223.7 893.3" fill="none" stroke="#eef5fa" stroke-width="3" stroke-linecap="round"/><path d="M202.1 860.2 C202.1 847.9 212.0 846.1 217.8 846.1 C226.3 846.1 230.6 853.4 230.6 861.1 Q216.3 864.8 202.1 860.2Z" fill="url(#capg)"/><path d="M230.8 867.5 C230.8 856.8 238.0 855.2 242.1 855.2 C248.3 855.2 251.4 861.5 251.4 868.3 Q241.1 871.5 230.8 867.5Z" fill="url(#capg)"/><path d="M209.2 874.7 C209.2 867.7 218.4 866.7 223.6 866.7 C231.4 866.7 235.4 870.8 235.4 875.2 Q222.3 877.3 209.2 874.7Z" fill="url(#capg)"/><path d="M198.3 888.4 C198.3 879.9 206.1 878.6 210.5 878.6 C217.2 878.6 220.5 883.7 220.5 889.1 Q209.4 891.6 198.3 888.4Z" fill="url(#capg)"/><path d="M226.0 886.0 C226.0 878.5 233.8 877.4 238.3 877.4 C244.9 877.4 248.2 881.8 248.2 886.6 Q237.1 888.8 226.0 886.0Z" fill="url(#capg)"/><path d="M189.4 899.1 C189.4 893.0 194.4 892.1 197.2 892.1 C201.5 892.1 203.6 895.7 203.6 899.6 Q196.5 901.4 189.4 899.1Z" fill="url(#capg)"/><path d="M207.2 898.6 C207.2 893.8 213.6 893.1 217.2 893.1 C222.7 893.1 225.4 895.9 225.4 899.0 Q216.3 900.4 207.2 898.6Z" fill="url(#capg)"/><path d="M228.0 893.3 C228.0 889.3 231.6 888.7 233.7 888.7 C236.8 888.7 238.3 891.1 238.3 893.6 Q233.2 894.8 228.0 893.3Z" fill="url(#capg)"/><path d="M240.5 897.4 C240.5 891.2 245.8 890.3 248.8 890.3 C253.3 890.3 255.6 893.9 255.6 897.8 Q248.0 899.6 240.5 897.4Z" fill="url(#capg)"/><path d="M201.3 909.7 C201.3 904.4 207.6 903.6 211.3 903.6 C216.8 903.6 219.5 906.7 219.5 910.1 Q210.4 911.7 201.3 909.7Z" fill="url(#capg)"/><path d="M228.0 908.1 C228.0 901.9 234.4 901.0 238.1 901.0 C243.5 901.0 246.3 904.6 246.3 908.5 Q237.1 910.3 228.0 908.1Z" fill="url(#capg)"/><path d="M195.5 917.1 C195.5 913.1 198.3 912.5 199.9 912.5 C202.3 912.5 203.4 914.9 203.4 917.4 Q199.5 918.6 195.5 917.1Z" fill="url(#capg)"/><path d="M243.1 917.4 C243.1 912.6 247.0 911.9 249.2 911.9 C252.5 911.9 254.2 914.8 254.2 917.8 Q248.6 919.2 243.1 917.4Z" fill="url(#capg)"/><rect x="201.1" y="842.4" width="6.600" height="6.600" rx="1.200" fill="#f06aa8"/><rect x="203.1" y="844.4" width="2.600" height="2.600" fill="#fbd3e4"/><rect x="246.7" y="851.3" width="6.600" height="6.600" rx="1.200" fill="#f06aa8"/><rect x="248.7" y="853.3" width="2.600" height="2.600" fill="#fbd3e4"/><rect x="197.2" y="873.1" width="6.600" height="6.600" rx="1.200" fill="#f06aa8"/><rect x="199.2" y="875.1" width="2.600" height="2.600" fill="#fbd3e4"/><rect x="245.3" y="872.1" width="6.600" height="6.600" rx="1.200" fill="#f06aa8"/><rect x="247.3" y="874.1" width="2.600" height="2.600" fill="#fbd3e4"/><rect x="183.9" y="887.0" width="6.600" height="6.600" rx="1.200" fill="#f06aa8"/><rect x="185.9" y="889.0" width="2.600" height="2.600" fill="#fbd3e4"/><rect x="255.3" y="886.0" width="6.600" height="6.600" rx="1.200" fill="#f06aa8"/><rect x="257.3" y="888.0" width="2.600" height="2.600" fill="#fbd3e4"/><rect x="188.6" y="904.8" width="6.600" height="6.600" rx="1.200" fill="#f06aa8"/><rect x="190.6" y="906.8" width="2.600" height="2.600" fill="#fbd3e4"/><rect x="250.7" y="904.2" width="6.600" height="6.600" rx="1.200" fill="#f06aa8"/><rect x="252.7" y="906.2" width="2.600" height="2.600" fill="#fbd3e4"/><ellipse cx="172.7" cy="864.5" rx="4.4" ry="10.3" fill="#3f7fa8" stroke="#2e6f8f" stroke-width=".500" transform="rotate(25 172.7 864.5)"/><ellipse cx="174.1" cy="861.9" rx="2.0" ry="4.4" fill="#2a4f74" stroke="none" stroke-width=".500" transform="rotate(25 174.1 861.9)"/><ellipse cx="276.2" cy="869.5" rx="4.0" ry="9.9" fill="#3a6f9f" stroke="#2e6f8f" stroke-width=".500" transform="rotate(-22 276.2 869.5)"/><ellipse cx="269.3" cy="852.6" rx="2.8" ry="1.4" fill="#2f5f88" stroke="#2e6f8f" stroke-width=".500" transform="rotate(10 269.3 852.6)"/><ellipse cx="162.2" cy="912.1" rx="3.0" ry="5.4" fill="#7fd2e2" stroke="#2e6f8f" stroke-width=".500" transform="rotate(-30 162.2 912.1)"/><ellipse cx="279.2" cy="919.0" rx="2.0" ry="5.2" fill="#7fd2e2" stroke="#2e6f8f" stroke-width=".500" transform="rotate(35 279.2 919.0)"/><circle cx="169.7" cy="848.7" r="1.0" fill="#2f4f6a"/><circle cx="167.8" cy="854.6" r="0.6" fill="#2f4f6a"/><circle cx="159.8" cy="902.2" r="0.8" fill="#2f4f6a"/><circle cx="158.8" cy="919.0" r="0.8" fill="#2f4f6a"/><circle cx="266.9" cy="847.7" r="0.8" fill="#2f4f6a"/><circle cx="285.7" cy="874.4" r="0.6" fill="#2f4f6a"/><circle cx="278.8" cy="885.3" r="1.2" fill="#2f4f6a"/><circle cx="227.2" cy="824.3" r="1.0" fill="#2f4f6a"/><rect x="168.1" y="931.3" width="7.200" height="7.200" rx="1.300" fill="#41628f"/><rect x="170.3" y="933.4" width="2.800" height="3" fill="#b9c9de"/><rect x="166.1" y="949.5" width="7.200" height="7.200" rx="1.300" fill="#41628f"/><rect x="168.3" y="951.6" width="2.800" height="3" fill="#b9c9de"/><rect x="183.4" y="971.0" width="7.200" height="7.200" rx="1.300" fill="#41628f"/><rect x="185.6" y="973.1" width="2.800" height="3" fill="#b9c9de"/><rect x="209.4" y="969.4" width="7.200" height="7.200" rx="1.300" fill="#41628f"/><rect x="211.6" y="971.5" width="2.800" height="3" fill="#b9c9de"/><rect x="232.6" y="966.6" width="7.200" height="7.200" rx="1.300" fill="#41628f"/><rect x="234.8" y="968.7" width="2.800" height="3" fill="#b9c9de"/><rect x="261.7" y="965.0" width="7.200" height="7.200" rx="1.300" fill="#41628f"/><rect x="263.9" y="967.1" width="2.800" height="3" fill="#b9c9de"/><rect x="270.2" y="948.2" width="7.200" height="7.200" rx="1.300" fill="#41628f"/><rect x="272.4" y="950.3" width="2.800" height="3" fill="#b9c9de"/><rect x="270.8" y="930.3" width="7.200" height="7.200" rx="1.300" fill="#41628f"/><rect x="273.0" y="932.4" width="2.800" height="3" fill="#b9c9de"/><circle cx="206.4" cy="951.8" r="2.800" fill="#86d6e8"/><circle cx="206.4" cy="951.8" r="1.200" fill="#5fbdd6"/><circle cx="217.9" cy="951.8" r="2.800" fill="#86d6e8"/><circle cx="217.9" cy="951.8" r="1.200" fill="#5fbdd6"/><circle cx="229.2" cy="951.8" r="2.800" fill="#86d6e8"/><circle cx="229.2" cy="951.8" r="1.200" fill="#5fbdd6"/><circle cx="240.1" cy="951.8" r="2.800" fill="#86d6e8"/><circle cx="240.1" cy="951.8" r="1.200" fill="#5fbdd6"/><text x="223.3" y="942.4" font-family="Liberation Sans,sans-serif" font-weight="bold" font-size="6.500" fill="#8b9bb0" text-anchor="middle" textLength="28" lengthAdjust="spacingAndGlyphs">ampler</text></g><text x="380" y="1008" font-family="Liberation Sans,sans-serif" font-weight="bold" font-size="5.500" fill="#33475f" textLength="24" lengthAdjust="spacingAndGlyphs">ampler</text><circle cx="408" cy="1006.500" r=".900" fill="#ee5a9d"/><circle cx="411.500" cy="1006.500" r=".900" fill="#86d6e8"/></svg><svg class="a" style="left:61px;top:321px;filter:blur(.45px)" width="364" height="204" viewBox="61 321 364 204"><text x="77.500" y="341.700" font-family="Liberation Sans,sans-serif" font-size="12.600" fill="#2f4a78" stroke="#2f4a78" stroke-width=".350" textLength="226.500" lengthAdjust="spacingAndGlyphs">Ctrl+click to select multiple objects</text><text x="106" y="357" font-family="Liberation Sans,sans-serif" font-size="12.600" fill="#2f4a78" stroke="#2f4a78" stroke-width=".350" textLength="169.500" lengthAdjust="spacingAndGlyphs">right click to select ‘Group’</text><path d="M78.500 355 C83 349.500 91 348.500 97 353" fill="none" stroke="#ee5a9d" stroke-width="1.800" stroke-linecap="round"/><path d="M94.500 348.500 L99.500 355.500 L92 356.500Z" fill="#ee5a9d"/><circle cx="179.5" cy="402.7" r="21.5" fill="none" stroke="#dcdcdc" stroke-width="3.600"/><circle cx="179.5" cy="402.7" r="21.5" fill="none" stroke="#63c5da" stroke-width="3.800" stroke-dasharray="85.1 135.1" transform="rotate(-90 179.5 402.7)"/><text x="179.5" y="408.2" font-family="Liberation Sans,sans-serif" font-size="10.500" fill="#595959" text-anchor="middle" textLength="23" lengthAdjust="spacingAndGlyphs">63%</text><circle cx="179.5" cy="466.2" r="21.5" fill="none" stroke="#dcdcdc" stroke-width="3.600"/><circle cx="179.5" cy="466.2" r="21.5" fill="none" stroke="#1b8ea1" stroke-width="3.800" stroke-dasharray="47.3 135.1" transform="rotate(-90 179.5 466.2)"/><text x="179.5" y="471.7" font-family="Liberation Sans,sans-serif" font-size="10.500" fill="#595959" text-anchor="middle" textLength="23" lengthAdjust="spacingAndGlyphs">35%</text><text x="147.500" y="394" font-family="Liberation Sans,sans-serif" text-anchor="end" font-weight="bold" font-size="4.600" fill="#63c5da">Spot</text><text x="147.500" y="399.500" font-family="Liberation Sans,sans-serif" text-anchor="end" font-weight="bold" font-size="4.600" fill="#63c5da" textLength="40" lengthAdjust="spacingAndGlyphs">Misalignment</text><text x="147.500" y="408" font-family="Liberation Sans,sans-serif" text-anchor="end" font-size="3.200" fill="#9a9a9a" textLength="43" lengthAdjust="spacingAndGlyphs">Identify areas shaped for</text><text x="147.500" y="413.500" font-family="Liberation Sans,sans-serif" text-anchor="end" font-size="3.200" fill="#9a9a9a" textLength="32" lengthAdjust="spacingAndGlyphs">better visual impact</text><text x="147.500" y="462" font-family="Liberation Sans,sans-serif" text-anchor="end" font-weight="bold" font-size="4.600" fill="#1b8ea1">Slide</text><text x="147.500" y="467.500" font-family="Liberation Sans,sans-serif" text-anchor="end" font-weight="bold" font-size="4.600" fill="#1b8ea1" textLength="35" lengthAdjust="spacingAndGlyphs">Consistency</text><text x="147.500" y="475" font-family="Liberation Sans,sans-serif" text-anchor="end" font-size="3.200" fill="#9a9a9a" textLength="36" lengthAdjust="spacingAndGlyphs">Consistent positioning</text><text x="147.500" y="480.500" font-family="Liberation Sans,sans-serif" text-anchor="end" font-size="3.200" fill="#9a9a9a" textLength="42" lengthAdjust="spacingAndGlyphs">enhances comprehension</text><g transform="translate(113.830 -413.710) scale(.940 .935)"><g><path d="M224.3 936.9Q250.1 942.0 275.1 943.1M224.3 936.9Q251.3 945.4 279.9 950.0M224.3 936.9Q250.9 947.9 275.2 954.9M224.3 936.9Q245.6 950.0 269.9 959.1M224.3 936.9Q249.7 954.0 271.6 967.0M224.3 936.9Q239.8 953.3 259.5 965.6M224.3 936.9Q241.3 954.3 253.7 967.6M224.3 936.9Q235.7 957.7 252.2 974.6M224.3 936.9Q237.7 958.1 245.7 975.4M224.3 936.9Q229.0 958.2 239.4 975.5M224.3 936.9Q231.8 957.8 233.5 974.8M224.3 936.9Q223.4 960.6 228.6 980.3M224.3 936.9Q226.4 959.6 222.6 978.4M224.3 936.9Q217.8 958.4 217.2 975.8M224.3 936.9Q220.2 960.1 210.3 979.4M224.3 936.9Q212.1 958.3 205.4 975.7M224.3 936.9Q215.4 956.3 201.4 971.6M224.3 936.9Q206.4 956.8 193.4 972.8M224.3 936.9Q209.4 954.3 190.3 967.7M224.3 936.9Q201.4 953.8 182.3 966.7M224.3 936.9Q204.1 950.8 180.7 960.7M224.3 936.9Q196.9 949.6 172.0 958.2M224.3 936.9Q199.1 946.3 172.0 951.8M224.3 936.9Q198.1 943.2 173.0 945.6" fill="none" stroke="#d3ebf5" stroke-width="1.500" stroke-linecap="round"/><path d="M224.3 936.9Q250.1 942.0 275.1 943.1M224.3 936.9Q251.3 945.4 279.9 950.0M224.3 936.9Q250.9 947.9 275.2 954.9M224.3 936.9Q245.6 950.0 269.9 959.1M224.3 936.9Q249.7 954.0 271.6 967.0M224.3 936.9Q239.8 953.3 259.5 965.6M224.3 936.9Q241.3 954.3 253.7 967.6M224.3 936.9Q235.7 957.7 252.2 974.6M224.3 936.9Q237.7 958.1 245.7 975.4M224.3 936.9Q229.0 958.2 239.4 975.5M224.3 936.9Q231.8 957.8 233.5 974.8M224.3 936.9Q223.4 960.6 228.6 980.3M224.3 936.9Q226.4 959.6 222.6 978.4M224.3 936.9Q217.8 958.4 217.2 975.8M224.3 936.9Q220.2 960.1 210.3 979.4M224.3 936.9Q212.1 958.3 205.4 975.7M224.3 936.9Q215.4 956.3 201.4 971.6M224.3 936.9Q206.4 956.8 193.4 972.8M224.3 936.9Q209.4 954.3 190.3 967.7M224.3 936.9Q201.4 953.8 182.3 966.7M224.3 936.9Q204.1 950.8 180.7 960.7M224.3 936.9Q196.9 949.6 172.0 958.2M224.3 936.9Q199.1 946.3 172.0 951.8M224.3 936.9Q198.1 943.2 173.0 945.6" fill="none" stroke="#e6f4fa" stroke-width="3.500" stroke-linecap="round" opacity=".600"/><ellipse cx="224.3" cy="944.9" rx="46" ry="13" fill="#e3f2f9" opacity=".900"/><path d="M207.4 822.9C212.7 822.9 221.9 823.1 229.2 825.9C236.5 828.7 245.4 833.8 251.0 839.7C256.6 845.7 259.6 853.9 262.9 861.5C266.2 869.1 268.5 878.4 270.8 885.3C273.2 892.3 276.5 897.6 276.8 903.2C277.1 908.8 276.1 914.7 272.8 919.0C269.5 923.3 263.2 926.6 257.0 929.0C250.7 931.3 240.4 932.3 235.2 933.3C229.9 934.4 228.6 935.3 225.2 935.3C221.9 935.3 220.3 934.4 215.3 933.3C210.4 932.3 201.8 931.0 195.5 929.0C189.2 926.9 182.3 925.0 177.7 921.0C173.0 917.1 169.1 910.4 167.8 905.2C166.4 899.9 167.8 894.6 169.7 889.3C171.7 884.0 176.8 879.1 179.7 873.4C182.5 867.8 185.1 861.5 186.6 855.6C188.1 849.7 186.8 842.7 188.6 837.8C190.4 832.8 194.4 828.3 197.5 825.9C200.6 823.4 202.1 822.9 207.4 822.9Z" fill="#8adbe9" stroke="#5aa9bf" stroke-width=".600"/><path d="M207.6 823.3C212.8 823.3 221.9 823.6 229.0 826.5C236.2 829.3 244.9 834.3 250.4 840.1C255.9 846.0 259.0 854.2 262.1 861.7C265.3 869.3 267.5 878.7 269.5 885.3C271.4 892.0 274.0 896.4 274.0 901.6C274.1 906.7 272.9 912.2 269.7 916.3C266.4 920.3 260.3 923.5 254.6 925.8C248.8 928.0 240.1 928.8 235.2 929.7C230.3 930.7 228.5 931.7 225.2 931.7C222.0 931.8 220.4 930.9 215.7 929.9C211.0 929.0 203.0 927.9 197.1 926.0C191.2 924.0 184.7 921.8 180.4 918.2C176.2 914.6 173.0 909.1 171.7 904.4C170.5 899.6 171.3 894.8 172.9 889.7C174.5 884.6 178.8 879.5 181.2 873.8C183.7 868.2 186.2 861.7 187.6 855.8C188.9 849.8 187.6 843.0 189.4 838.2C191.1 833.3 195.0 828.9 198.1 826.5C201.1 824.0 202.5 823.3 207.6 823.3Z" fill="#4f93bd"/><path d="M207.8 823.9C212.8 823.9 221.8 824.2 228.8 827.0C235.8 829.9 244.4 834.9 249.8 840.7C255.3 846.5 258.3 854.5 261.3 861.9C264.4 869.4 266.4 879.0 268.1 885.3C269.7 891.7 271.6 895.6 271.2 900.2C270.9 904.8 269.3 909.6 266.1 913.1C262.9 916.6 257.2 919.4 252.0 921.4C246.9 923.5 239.6 924.4 235.2 925.4C230.7 926.4 228.4 927.3 225.2 927.4C222.1 927.4 220.8 926.6 216.3 925.8C211.9 924.9 204.2 924.1 198.7 922.2C193.2 920.4 187.0 917.9 183.2 914.7C179.5 911.4 177.1 906.9 176.1 902.8C175.0 898.6 175.7 894.5 176.9 889.7C178.1 884.9 181.2 879.9 183.2 874.2C185.2 868.6 187.6 861.9 188.8 856.0C190.0 850.1 188.7 843.6 190.4 838.7C192.0 833.9 195.8 829.5 198.7 827.0C201.6 824.6 202.8 823.9 207.8 823.9Z" fill="#35608c"/><path d="M221.3 908.9 C221.3 926.9 216.3 932.9 208.3 937.9 H240.3 C232.3 932.9 227.3 926.9 227.3 908.9Z" fill="#e8f3f9"/><path d="M223.9 932.9 L223.7 859.6M223.7 875.4 L216.3 861.5M224.1 881.4 L239.1 869.5M223.7 893.3 L209.4 886.3M224.1 895.2 L237.1 886.3M223.7 905.2 L197.5 898.2M224.1 903.2 L248.0 897.2M223.7 915.1 L209.4 909.1M224.1 914.1 L238.1 907.5M223.7 922.0 L200.5 917.1M224.1 921.0 L248.6 917.1" fill="none" stroke="#dfeaf4" stroke-width="1.800" stroke-linecap="round"/><path d="M223.9 933.9 L223.7 893.3" fill="none" stroke="#eef5fa" stroke-width="3" stroke-linecap="round"/><path d="M202.1 860.2 C202.1 847.9 212.0 846.1 217.8 846.1 C226.3 846.1 230.6 853.4 230.6 861.1 Q216.3 864.8 202.1 860.2Z" fill="url(#capg)"/><path d="M230.8 867.5 C230.8 856.8 238.0 855.2 242.1 855.2 C248.3 855.2 251.4 861.5 251.4 868.3 Q241.1 871.5 230.8 867.5Z" fill="url(#capg)"/><path d="M209.2 874.7 C209.2 867.7 218.4 866.7 223.6 866.7 C231.4 866.7 235.4 870.8 235.4 875.2 Q222.3 877.3 209.2 874.7Z" fill="url(#capg)"/><path d="M198.3 888.4 C198.3 879.9 206.1 878.6 210.5 878.6 C217.2 878.6 220.5 883.7 220.5 889.1 Q209.4 891.6 198.3 888.4Z" fill="url(#capg)"/><path d="M226.0 886.0 C226.0 878.5 233.8 877.4 238.3 877.4 C244.9 877.4 248.2 881.8 248.2 886.6 Q237.1 888.8 226.0 886.0Z" fill="url(#capg)"/><path d="M189.4 899.1 C189.4 893.0 194.4 892.1 197.2 892.1 C201.5 892.1 203.6 895.7 203.6 899.6 Q196.5 901.4 189.4 899.1Z" fill="url(#capg)"/><path d="M207.2 898.6 C207.2 893.8 213.6 893.1 217.2 893.1 C222.7 893.1 225.4 895.9 225.4 899.0 Q216.3 900.4 207.2 898.6Z" fill="url(#capg)"/><path d="M228.0 893.3 C228.0 889.3 231.6 888.7 233.7 888.7 C236.8 888.7 238.3 891.1 238.3 893.6 Q233.2 894.8 228.0 893.3Z" fill="url(#capg)"/><path d="M240.5 897.4 C240.5 891.2 245.8 890.3 248.8 890.3 C253.3 890.3 255.6 893.9 255.6 897.8 Q248.0 899.6 240.5 897.4Z" fill="url(#capg)"/><path d="M201.3 909.7 C201.3 904.4 207.6 903.6 211.3 903.6 C216.8 903.6 219.5 906.7 219.5 910.1 Q210.4 911.7 201.3 909.7Z" fill="url(#capg)"/><path d="M228.0 908.1 C228.0 901.9 234.4 901.0 238.1 901.0 C243.5 901.0 246.3 904.6 246.3 908.5 Q237.1 910.3 228.0 908.1Z" fill="url(#capg)"/><path d="M195.5 917.1 C195.5 913.1 198.3 912.5 199.9 912.5 C202.3 912.5 203.4 914.9 203.4 917.4 Q199.5 918.6 195.5 917.1Z" fill="url(#capg)"/><path d="M243.1 917.4 C243.1 912.6 247.0 911.9 249.2 911.9 C252.5 911.9 254.2 914.8 254.2 917.8 Q248.6 919.2 243.1 917.4Z" fill="url(#capg)"/><rect x="201.1" y="842.4" width="6.600" height="6.600" rx="1.200" fill="#f06aa8"/><rect x="203.1" y="844.4" width="2.600" height="2.600" fill="#fbd3e4"/><rect x="246.7" y="851.3" width="6.600" height="6.600" rx="1.200" fill="#f06aa8"/><rect x="248.7" y="853.3" width="2.600" height="2.600" fill="#fbd3e4"/><rect x="197.2" y="873.1" width="6.600" height="6.600" rx="1.200" fill="#f06aa8"/><rect x="199.2" y="875.1" width="2.600" height="2.600" fill="#fbd3e4"/><rect x="245.3" y="872.1" width="6.600" height="6.600" rx="1.200" fill="#f06aa8"/><rect x="247.3" y="874.1" width="2.600" height="2.600" fill="#fbd3e4"/><rect x="183.9" y="887.0" width="6.600" height="6.600" rx="1.200" fill="#f06aa8"/><rect x="185.9" y="889.0" width="2.600" height="2.600" fill="#fbd3e4"/><rect x="255.3" y="886.0" width="6.600" height="6.600" rx="1.200" fill="#f06aa8"/><rect x="257.3" y="888.0" width="2.600" height="2.600" fill="#fbd3e4"/><rect x="188.6" y="904.8" width="6.600" height="6.600" rx="1.200" fill="#f06aa8"/><rect x="190.6" y="906.8" width="2.600" height="2.600" fill="#fbd3e4"/><rect x="250.7" y="904.2" width="6.600" height="6.600" rx="1.200" fill="#f06aa8"/><rect x="252.7" y="906.2" width="2.600" height="2.600" fill="#fbd3e4"/><ellipse cx="172.7" cy="864.5" rx="4.4" ry="10.3" fill="#3f7fa8" stroke="#2e6f8f" stroke-width=".500" transform="rotate(25 172.7 864.5)"/><ellipse cx="174.1" cy="861.9" rx="2.0" ry="4.4" fill="#2a4f74" stroke="none" stroke-width=".500" transform="rotate(25 174.1 861.9)"/><ellipse cx="276.2" cy="869.5" rx="4.0" ry="9.9" fill="#3a6f9f" stroke="#2e6f8f" stroke-width=".500" transform="rotate(-22 276.2 869.5)"/><ellipse cx="269.3" cy="852.6" rx="2.8" ry="1.4" fill="#2f5f88" stroke="#2e6f8f" stroke-width=".500" transform="rotate(10 269.3 852.6)"/><ellipse cx="162.2" cy="912.1" rx="3.0" ry="5.4" fill="#7fd2e2" stroke="#2e6f8f" stroke-width=".500" transform="rotate(-30 162.2 912.1)"/><ellipse cx="279.2" cy="919.0" rx="2.0" ry="5.2" fill="#7fd2e2" stroke="#2e6f8f" stroke-width=".500" transform="rotate(35 279.2 919.0)"/><circle cx="169.7" cy="848.7" r="1.0" fill="#2f4f6a"/><circle cx="167.8" cy="854.6" r="0.6" fill="#2f4f6a"/><circle cx="159.8" cy="902.2" r="0.8" fill="#2f4f6a"/><circle cx="158.8" cy="919.0" r="0.8" fill="#2f4f6a"/><circle cx="266.9" cy="847.7" r="0.8" fill="#2f4f6a"/><circle cx="285.7" cy="874.4" r="0.6" fill="#2f4f6a"/><circle cx="278.8" cy="885.3" r="1.2" fill="#2f4f6a"/><circle cx="227.2" cy="824.3" r="1.0" fill="#2f4f6a"/><rect x="168.1" y="931.3" width="7.200" height="7.200" rx="1.300" fill="#41628f"/><rect x="170.3" y="933.4" width="2.800" height="3" fill="#b9c9de"/><rect x="166.1" y="949.5" width="7.200" height="7.200" rx="1.300" fill="#41628f"/><rect x="168.3" y="951.6" width="2.800" height="3" fill="#b9c9de"/><rect x="183.4" y="971.0" width="7.200" height="7.200" rx="1.300" fill="#41628f"/><rect x="185.6" y="973.1" width="2.800" height="3" fill="#b9c9de"/><rect x="209.4" y="969.4" width="7.200" height="7.200" rx="1.300" fill="#41628f"/><rect x="211.6" y="971.5" width="2.800" height="3" fill="#b9c9de"/><rect x="232.6" y="966.6" width="7.200" height="7.200" rx="1.300" fill="#41628f"/><rect x="234.8" y="968.7" width="2.800" height="3" fill="#b9c9de"/><rect x="261.7" y="965.0" width="7.200" height="7.200" rx="1.300" fill="#41628f"/><rect x="263.9" y="967.1" width="2.800" height="3" fill="#b9c9de"/><rect x="270.2" y="948.2" width="7.200" height="7.200" rx="1.300" fill="#41628f"/><rect x="272.4" y="950.3" width="2.800" height="3" fill="#b9c9de"/><rect x="270.8" y="930.3" width="7.200" height="7.200" rx="1.300" fill="#41628f"/><rect x="273.0" y="932.4" width="2.800" height="3" fill="#b9c9de"/><circle cx="206.4" cy="951.8" r="2.800" fill="#86d6e8"/><circle cx="206.4" cy="951.8" r="1.200" fill="#5fbdd6"/><circle cx="217.9" cy="951.8" r="2.800" fill="#86d6e8"/><circle cx="217.9" cy="951.8" r="1.200" fill="#5fbdd6"/><circle cx="229.2" cy="951.8" r="2.800" fill="#86d6e8"/><circle cx="229.2" cy="951.8" r="1.200" fill="#5fbdd6"/><circle cx="240.1" cy="951.8" r="2.800" fill="#86d6e8"/><circle cx="240.1" cy="951.8" r="1.200" fill="#5fbdd6"/><text x="223.3" y="942.4" font-family="Liberation Sans,sans-serif" font-weight="bold" font-size="6.500" fill="#8b9bb0" text-anchor="middle" textLength="28" lengthAdjust="spacingAndGlyphs">ampler</text></g></g><text x="243" y="521.500" font-family="Liberation Sans,sans-serif" font-size="4.200" fill="#f08db8" text-anchor="middle" textLength="20" lengthAdjust="spacingAndGlyphs">ampler.io</text></svg><svg class="a" style="left:40px;top:10px" width="230" height="190" viewBox="40 10 230 190"><path d="M63.1 94.2C62.7 90.0 63.6 83.9 64.9 79.4C66.2 74.9 68.2 70.9 71.1 67.0C74.0 63.1 78.0 59.4 82.3 55.9C86.6 52.4 92.1 48.9 97.1 46.0C102.0 43.1 107.0 40.9 112.0 38.6C117.0 36.3 122.3 33.5 126.8 32.4C131.3 31.3 134.7 31.2 139.2 31.8C143.7 32.4 149.1 34.1 154.0 36.1C158.9 38.1 164.0 40.4 168.9 43.5C173.8 46.6 179.2 51.3 183.7 54.6C188.2 57.9 192.0 60.8 196.1 63.3C200.2 65.8 204.3 67.2 208.4 69.5C212.5 71.8 216.7 73.6 220.8 76.9C224.9 80.2 230.1 85.4 233.2 89.3C236.3 93.2 238.0 95.5 239.4 100.4C240.8 105.3 241.8 113.0 241.8 118.5C241.8 124.0 240.6 128.6 239.4 133.3C238.2 138.0 236.5 142.6 234.4 146.9C232.3 151.2 229.9 155.4 227.0 159.3C224.1 163.2 220.6 167.2 217.1 170.4C213.6 173.6 209.9 176.4 206.0 178.4C202.1 180.4 198.1 181.4 193.6 182.2C189.1 183.0 183.3 183.3 178.8 183.4C174.3 183.5 170.1 183.3 166.4 182.8C162.7 182.3 160.2 181.5 156.5 180.3C152.8 179.1 148.2 177.2 144.1 175.4C140.0 173.6 135.8 171.1 131.7 169.2C127.6 167.3 123.5 166.3 119.4 164.2C115.3 162.1 110.9 159.9 107.0 156.8C103.1 153.7 99.6 149.4 95.9 145.7C92.2 142.0 88.2 138.8 84.7 134.5C81.2 130.2 77.7 124.7 74.8 119.7C71.9 114.8 69.4 109.0 67.4 104.8C65.5 100.5 63.5 98.4 63.1 94.2ZM78.6 94.2C78.4 91.2 78.6 85.6 79.8 81.9C81.0 78.2 83.1 75.3 86.0 72.0C88.9 68.7 93.2 65.0 97.1 62.1C101.0 59.2 105.4 56.6 109.5 54.6C113.6 52.6 117.8 51.1 121.9 50.3C126.0 49.5 130.1 49.3 134.2 49.7C138.3 50.1 142.5 51.4 146.6 52.8C150.7 54.2 154.9 55.9 159.0 58.3C163.1 60.7 167.2 64.3 171.3 67.0C175.4 69.7 179.6 72.1 183.7 74.4C187.8 76.7 192.0 78.1 196.1 80.6C200.2 83.1 204.7 86.2 208.4 89.3C212.1 92.4 215.5 96.1 218.3 99.2C221.1 102.3 223.4 105.2 225.0 108.0C226.6 110.8 227.3 113.2 227.6 116.0C227.9 118.8 227.5 121.1 227.0 124.6C226.5 128.1 225.9 132.9 224.5 137.0C223.1 141.1 220.8 145.7 218.3 149.4C215.8 153.1 212.8 156.6 209.7 159.3C206.6 162.0 203.5 164.0 199.8 165.5C196.1 167.0 191.7 167.9 187.4 168.5C183.1 169.1 177.9 169.4 173.8 169.2C169.7 169.0 166.4 168.3 162.7 167.3C159.0 166.3 155.4 164.9 151.5 163.0C147.6 161.1 143.3 157.9 139.2 155.6C135.1 153.3 130.7 151.5 126.8 149.4C122.9 147.3 119.2 146.1 115.7 143.2C112.2 140.3 109.1 135.6 105.8 132.1C102.5 128.6 99.0 125.7 95.9 122.2C92.8 118.7 89.7 114.7 87.2 111.0C84.7 107.3 82.4 102.7 81.0 99.9C79.6 97.1 78.8 97.2 78.6 94.2Z" fill="#ee569c" fill-rule="evenodd"/></svg></body></html>
